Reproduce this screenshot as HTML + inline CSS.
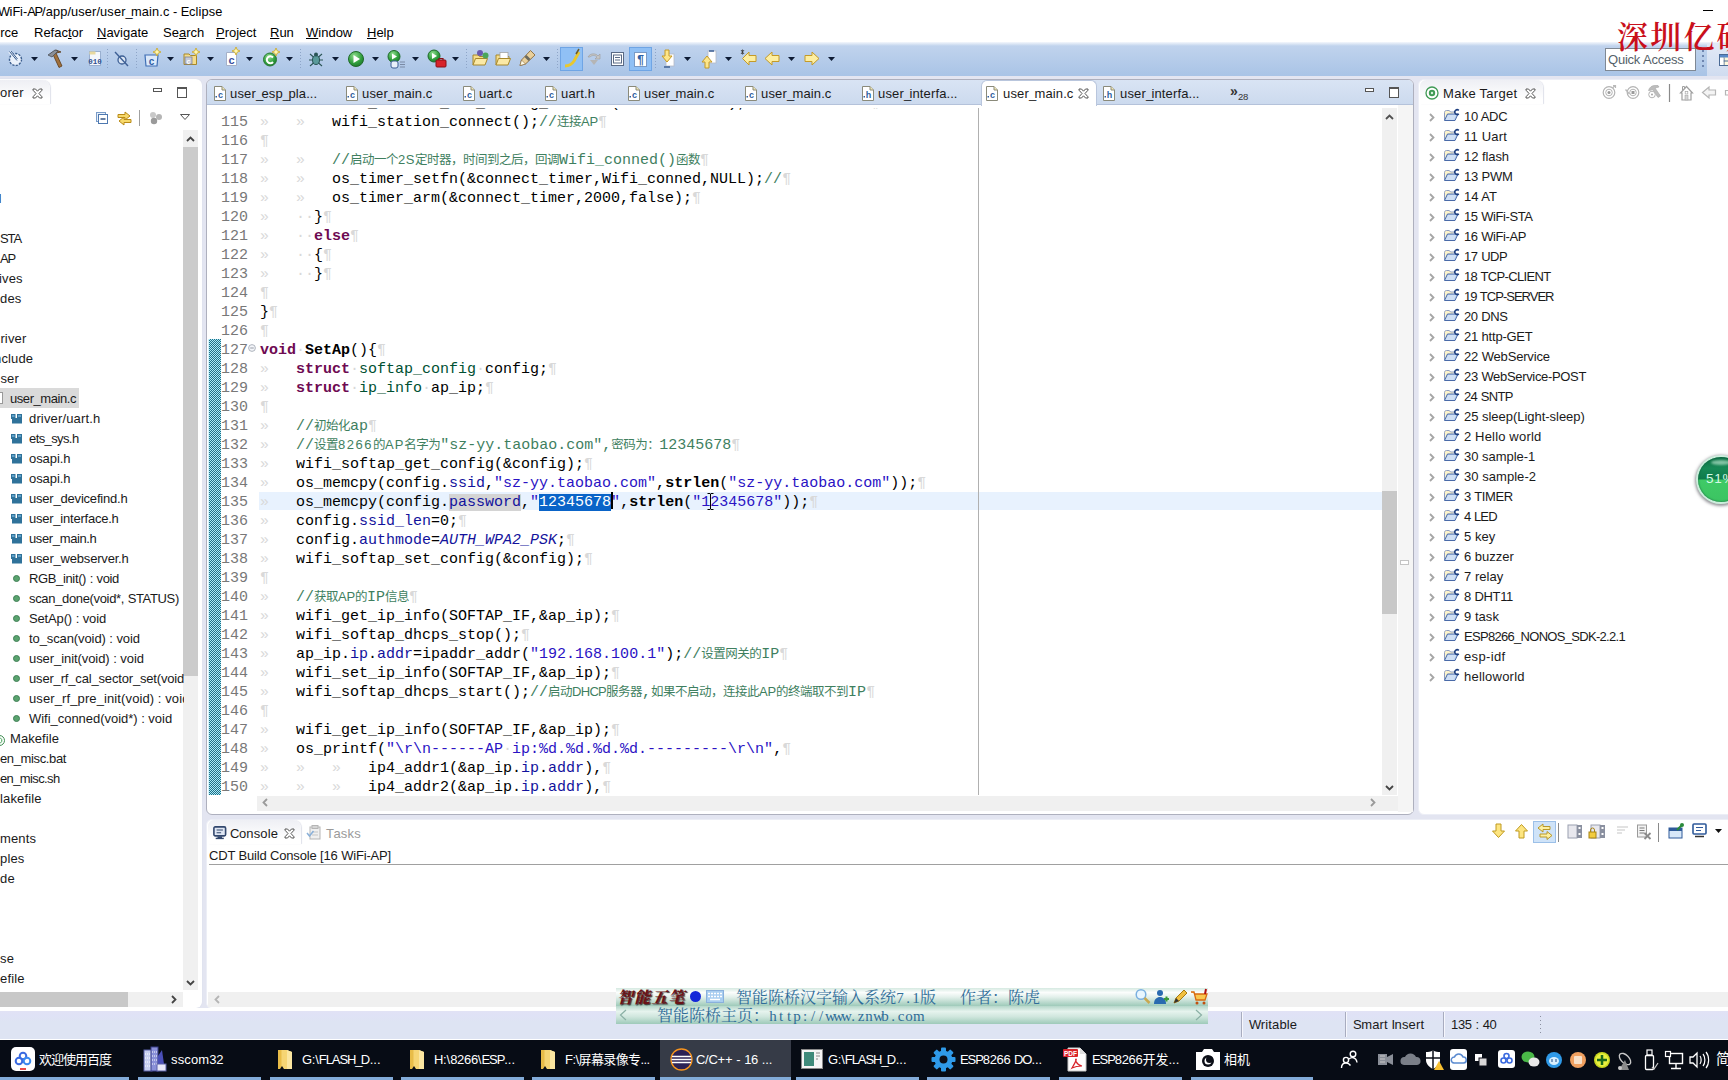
<!DOCTYPE html><html><head><meta charset="utf-8"><title>Eclipse</title><style>
*{box-sizing:border-box}
html,body{margin:0;padding:0}
body{width:1728px;height:1080px;overflow:hidden;position:relative;background:#fff;font-family:'Liberation Sans','Noto Sans CJK SC',sans-serif;font-size:13px;color:#1a1a1a}
.a{position:absolute}
.t{position:absolute;white-space:pre;line-height:16px;height:16px}
.code{position:absolute;white-space:pre;font-family:'Liberation Mono','Noto Sans CJK SC',monospace;font-size:15px;line-height:19px;height:19px;color:#000}
.ln{position:absolute;white-space:pre;font-family:'Liberation Mono','Noto Sans CJK SC',monospace;font-size:15px;line-height:19px;height:19px;color:#787878;width:27px;text-align:right;left:221px}
.k{color:#6e0a52;font-weight:bold}
.c{color:#3f7f5f}
.s{color:#2a12c4}
.f{color:#12129c}
.ty{color:#005032}
.b{font-weight:bold}
.w{color:#d9d9d9}
.cj{font-family:'Noto Sans CJK SC',sans-serif;font-size:12.5px;display:inline-block;text-align:center;line-height:12px;width:12px}
.la{font-family:'Liberation Sans',sans-serif;font-size:13px;line-height:12px}
.sel{background:#0a64c8;color:#fff}
.occ{background:#d4d4d4}
</style></head><body>
<div class="t" style="left:-2px;top:4px;font-size:12.8px;color:#000"><span style="letter-spacing:-.500px">W</span><span style="letter-spacing:.150px">i</span><span style="letter-spacing:-.500px">F</span><span style="letter-spacing:.150px">i</span>-<span style="letter-spacing:-1.100px">AP</span>/<span style="letter-spacing:.150px">app</span>/<span style="letter-spacing:.150px">user</span>/<span style="letter-spacing:.150px">user</span><span style="letter-spacing:-1.700px">_</span><span style="letter-spacing:.150px">main</span>.<span style="letter-spacing:.150px">c</span> - <span style="letter-spacing:-.500px">E</span><span style="letter-spacing:.150px">clipse</span></div>
<div class="a" style="left:1703px;top:10px;width:10px;height:1px;background:#000"></div>
<div class="t" style="left:-7px;top:25px;font-size:13px;color:#000">urce</div>
<div class="t" style="left:34px;top:25px;font-size:13px;color:#000">Refac<u>t</u>or</div>
<div class="t" style="left:97px;top:25px;font-size:13px;color:#000"><u>N</u>avigate</div>
<div class="t" style="left:163px;top:25px;font-size:13px;color:#000">Se<u>a</u>rch</div>
<div class="t" style="left:216px;top:25px;font-size:13px;color:#000"><u>P</u>roject</div>
<div class="t" style="left:270px;top:25px;font-size:13px;color:#000"><u>R</u>un</div>
<div class="t" style="left:306px;top:25px;font-size:13px;color:#000"><u>W</u>indow</div>
<div class="t" style="left:367px;top:25px;font-size:13px;color:#000"><u>H</u>elp</div>
<div class="a" style="left:0px;top:42px;width:1728px;height:34px;background:linear-gradient(#f4f7fc 0,#c0d3ed 4px,#a9c4e6 100%)"></div>
<div class="a" style="left:0px;top:76px;width:1728px;height:1004px;background:#e3e5f1"></div>
<svg class="a" style="left:0;top:43px" width="860" height="32" viewBox="0 0 860 32"><defs><radialGradient id="gr" cx=".4" cy=".3" r=".8"><stop offset="0" stop-color="#8fdc8f"/><stop offset=".6" stop-color="#2f9e3c"/><stop offset="1" stop-color="#1a6e28"/></radialGradient></defs><circle cx="15.500" cy="16.500" r="6" fill="#eaf1fb" stroke="#3d5f8f" stroke-width="1.400" stroke-dasharray="2.200 1.200"/><path d="M9.500 8.500l7.500 9" stroke="#e8f0fb" stroke-width="3"/><path d="M9.500 8.500l7.500 9M11 8l6.500 8" stroke="#3d5f8f" stroke-width="1"/><path d="M31 14h7l-3.500 4z" fill="#0d1a33"/><path d="M50 11l6-4 5 2-5 1 6 13-3 1.500-6-13z" fill="#a0703c" stroke="#5a3a18" stroke-width=".8"/><path d="M48 12l7-5 3 1-6 6z" fill="#8a8f98" stroke="#4a4f58" stroke-width=".8"/><path d="M71 14h7l-3.500 4z" fill="#0d1a33"/><rect x="89.500" y="8.500" width="11" height="14" fill="#f4f7fc" stroke="#9ab0d0"/><rect x="89.500" y="8.500" width="6" height="3" fill="#e8d9a0"/><text x="95" y="21" font-size="7.500" font-family="Liberation Mono,monospace" font-weight="bold" fill="#2f4f8f" text-anchor="middle">010</text><path d="M107.500 6v20" stroke="#8ea5c8" stroke-dasharray="1 2"/><circle cx="122" cy="17" r="4" fill="#dbe6f5" stroke="#3d5f95" stroke-width="1.300"/><path d="M115 9l13 14" stroke="#3d5f95" stroke-width="1.400"/><path d="M136.500 6v20" stroke="#8ea5c8" stroke-dasharray="1 2"/><path d="M145 12h13l-1 11h-11z" fill="#dce9fa" stroke="#3f6fb5" stroke-width="1.200"/><text x="151.500" y="21.500" font-size="10" font-family="Liberation Sans,sans-serif" font-weight="bold" fill="#2f5fa5" text-anchor="middle">c</text><path d="M157 5l1.200 2.800 2.800 1.200-2.800 1.200L157 13l-1.200-2.800L153 9l2.800-1.200z" fill="#fff6b0" stroke="#c9a520" stroke-width=".8"/><path d="M167 14h7l-3.500 4z" fill="#0d1a33"/><path d="M184 11h5l1.500 1.500h6v9h-12.500z" fill="#f5dd8a" stroke="#a8882a" stroke-width="1"/><rect x="185" y="14" width="7" height="7" fill="#c5cad8" stroke="#7a8098" stroke-width=".8"/><text x="188.500" y="20.500" font-size="7" font-family="Liberation Sans,sans-serif" font-weight="bold" fill="#fff" text-anchor="middle">c</text><path d="M196 5l1.200 2.800 2.800 1.200-2.800 1.200L196 13l-1.200-2.800L192 9l2.800-1.200z" fill="#fff6b0" stroke="#c9a520" stroke-width=".8"/><path d="M207 14h7l-3.500 4z" fill="#0d1a33"/><path d="M226.500 9.500h8l2 2v11h-10z" fill="#fff" stroke="#a5b0c8"/><text x="231.500" y="21" font-size="11" font-family="Liberation Sans,sans-serif" font-weight="bold" fill="#3a4fa0" text-anchor="middle">c</text><path d="M236 4l1.200 2.800 2.800 1.200-2.800 1.200L236 12l-1.200-2.800L232 8l2.800-1.200z" fill="#fff6b0" stroke="#c9a520" stroke-width=".8"/><path d="M246 14h7l-3.500 4z" fill="#0d1a33"/><circle cx="270" cy="16.500" r="6.500" fill="url(#gr)" stroke="#2a7a35" stroke-width="1"/><path d="M273 14.500a3.500 3.500 0 1 0 0 4.500" fill="none" stroke="#fff" stroke-width="2"/><path d="M276 5l1.200 2.800 2.800 1.200-2.800 1.200L276 13l-1.200-2.800L272 9l2.800-1.200z" fill="#fff6b0" stroke="#c9a520" stroke-width=".8"/><path d="M286 14h7l-3.500 4z" fill="#0d1a33"/><path d="M300.500 6v20" stroke="#8ea5c8" stroke-dasharray="1 2"/><ellipse cx="316" cy="17" rx="3.500" ry="4.500" fill="#5a9a9a" stroke="#2a5555" stroke-width="1"/><circle cx="316" cy="11.500" r="2" fill="#2a5555"/><path d="M310 11l3.500 3M322 11l-3.500 3M309 17h3.500M323 17h-3.500M310 23l3.500-3M322 23l-3.500-3" stroke="#2a5555" stroke-width="1.100"/><path d="M332 14h7l-3.500 4z" fill="#0d1a33"/><circle cx="356" cy="16" r="7.500" fill="url(#gr)" stroke="#1f6a2a" stroke-width="1"/><path d="M353.500 12l6.500 4-6.500 4z" fill="#fff"/><path d="M372 14h7l-3.500 4z" fill="#0d1a33"/><circle cx="394" cy="13.500" r="6" fill="url(#gr)" stroke="#1f6a2a" stroke-width="1"/><path d="M392 10.500l5 3-5 3z" fill="#fff"/><rect x="391" y="18" width="7" height="7" rx="2" fill="#e8f0fa" stroke="#3d5f95"/><path d="M400 19h5M400 21.500h5M400 24h5" stroke="#7a8aa5"/><path d="M412 14h7l-3.500 4z" fill="#0d1a33"/><circle cx="434" cy="13" r="6" fill="url(#gr)" stroke="#1f6a2a" stroke-width="1"/><path d="M432 10l5 3-5 3z" fill="#fff"/><rect x="436" y="17" width="10" height="7" rx="1" fill="#d8232a" stroke="#8a1015"/><path d="M439 17v-1.500h4V17" fill="none" stroke="#8a1015" stroke-width="1.200"/><path d="M452 14h7l-3.500 4z" fill="#0d1a33"/><path d="M466.500 6v20" stroke="#8ea5c8" stroke-dasharray="1 2"/><path d="M473 22V12h5l1.500 1.500h6.500V15" fill="#f5dd8a" stroke="#a8882a"/><path d="M473 22l2.500-6.500h12l-2.500 6.500z" fill="#fbe9a5" stroke="#a8882a"/><circle cx="480" cy="10" r="3" fill="#6a5ab0"/><circle cx="485.500" cy="12.500" r="3" fill="#4aa55a"/><path d="M496 22V12h5l1.500 1.500h6.500V15" fill="#f5dd8a" stroke="#a8882a"/><rect x="500" y="9.500" width="8" height="6" fill="#fff" stroke="#a5a5a5" stroke-width=".8"/><path d="M496 22l2.500-6.500h12l-2.500 6.500z" fill="#fbe9a5" stroke="#a8882a"/><path d="M520 22.500l1.500-5.500 9-9.500 4.500 4.500-9.500 9z" fill="#e9cf9a" stroke="#8a6a3a" stroke-width=".9"/><path d="M520 22.500l1.500-5.500 4 4z" fill="#fffbe8" stroke="#8a6a3a" stroke-width=".6"/><path d="M524.500 14l4 4 2-2-4-4z" fill="#6a6a60"/><path d="M543 14h7l-3.500 4z" fill="#0d1a33"/><path d="M557.500 6v20" stroke="#8ea5c8" stroke-dasharray="1 2"/><rect x="560.500" y="4.500" width="22" height="23" fill="#90c0f5" stroke="#6fa5e5"/><path d="M565 23c3 0 7-2 9-5l5-9" fill="none" stroke="#e8c830" stroke-width="3"/><path d="M576 11l3-5" stroke="#6a5a2a" stroke-width="1.500"/><path d="M588 14c2-4 8-4 10-1l2-2v5h-5l2-2c-2-2-5-2-7 0z" fill="#c5c5c5" stroke="#9a9a9a" stroke-width=".6"/><path d="M590 17l4 5 4-5z" fill="#b5b5b5"/><rect x="611.500" y="9.500" width="12" height="13" fill="#fff" stroke="#5a6a85"/><rect x="613.500" y="12" width="8" height="8" fill="none" stroke="#5a6a85"/><path d="M615 14.500h5M615 17h5" stroke="#5a6a85"/><rect x="629.500" y="4.500" width="22" height="23" fill="#90c0f5" stroke="#6fa5e5"/><rect x="634.500" y="9.500" width="12" height="14" fill="#fff" stroke="#7a9ac5"/><text x="640.500" y="21" font-size="12" font-family="Liberation Sans,sans-serif" font-weight="bold" fill="#2f5fa5" text-anchor="middle">¶</text><path d="M655.500 6v20" stroke="#8ea5c8" stroke-dasharray="1 2"/><rect x="666" y="11" width="8" height="12" fill="#fff" stroke="#b5bac5" stroke-width=".8"/><path d="M665 7h4v6h3l-5 6-5-6h3z" fill="#fde68a" stroke="#c49a28" stroke-width="1"/><path d="M664 24h6" stroke="#3d5f95" stroke-width="1.500"/><path d="M684 14h7l-3.500 4z" fill="#0d1a33"/><rect x="708" y="8" width="8" height="12" fill="#fff" stroke="#b5bac5" stroke-width=".8"/><path d="M705 25h4v-6h3l-5-6-5 6h3z" fill="#fde68a" stroke="#c49a28" stroke-width="1"/><path d="M709 8h5" stroke="#3d5f95" stroke-width="1.500"/><path d="M725 14h7l-3.500 4z" fill="#0d1a33"/><path d="M756 12.500h-7V9l-6.500 6.500 6.500 6.500v-3.500h7z" fill="#fdeea0" stroke="#c49a28" stroke-width="1"/><path d="M741 7l3 4M744 7l-3 4M742.500 6.500v5" stroke="#333" stroke-width=".8"/><path d="M779 12.500h-7V9l-7 6.500 7 6.500v-3.500h7z" fill="#fdeea0" stroke="#c49a28" stroke-width="1"/><path d="M788 14h7l-3.500 4z" fill="#0d1a33"/><path d="M805 12.500h7V9l7 6.500-7 6.500v-3.500h-7z" fill="#fdeea0" stroke="#c49a28" stroke-width="1"/><path d="M828 14h7l-3.500 4z" fill="#0d1a33"/></svg>
<div class="a" style="left:1702px;top:50px;width:2px;height:20px;background:repeating-linear-gradient(#6f86b0 0 2px,transparent 2px 5px)"></div>
<div class="a" style="left:1707px;top:44px;width:21px;height:32px;background:linear-gradient(#e2e9f6,#d0dcf0)"></div>
<svg class="a" style="left:1719px;top:53px" width="9" height="14" viewBox="0 0 9 14"><rect x="0.500" y="1.500" width="12" height="11" fill="#fdf8dc" stroke="#4a6a95"/><rect x="1" y="2" width="11" height="2.500" fill="#5a8ac8"/><path d="M0.500 8h12M5 4.500v8" stroke="#4a6a95"/><rect x="1" y="5" width="3.500" height="7" fill="#fff"/></svg>
<div class="a" style="left:1605px;top:48px;width:91px;height:23px;background:#fff;border:1px solid #7f8894"></div>
<div class="t" style="left:1608px;top:52px;color:#55626a;font-size:13px;letter-spacing:-0.23px;word-spacing:0.23px">Quick Access</div>
<div class="a" style="left:1617px;top:13px;font-family:'Noto Serif CJK SC',serif;font-weight:600;font-size:31px;line-height:44px;color:#c9101c;white-space:pre;letter-spacing:2.200px">深圳亿研</div>
<div class="a" style="left:-10px;top:79px;width:212px;height:929px;background:#fff;border-radius:0 6px 6px 0;box-shadow:0 0 1px #ccd0e0"></div>
<div class="a" style="left:-10px;top:80px;width:60px;height:24px;background:linear-gradient(#eeeff4,#fff 80%);border-radius:0 8px 0 0;box-shadow:1px 0 1px #dfe1ea"></div>
<div class="t" style="left:0px;top:85px;font-size:13px"><span style="letter-spacing:.150px">orer</span></div>
<svg class="a" style="left:32px;top:88px" width="11" height="11" viewBox="0 0 11 11"><path d="M1 1h2.5l2 2.2 2-2.2H10v1.2L7 5.5l3 3.3V10H7.5l-2-2.2-2 2.2H1V8.8l3-3.3-3-3.3z" fill="#fff" stroke="#555" stroke-width="1"/></svg>
<div class="a" style="left:153px;top:88px;width:9px;height:4px;border:1px solid #555;background:#fff"></div>
<div class="a" style="left:177px;top:87px;width:10px;height:11px;border:1px solid #555;border-top-width:2px;background:#fff"></div>
<svg class="a" style="left:94px;top:109px" width="100" height="18" viewBox="0 0 100 18"><rect x="2.5" y="3.5" width="9" height="9" fill="#e8f0fa" stroke="#7a9cc8"/><rect x="4.5" y="5.5" width="9" height="9" fill="#fff" stroke="#4d78b0"/><path d="M6.5 10h5" stroke="#26487a" stroke-width="1.4"/><path d="M24 5.5h7V3l5 4-5 4V8.5h-7z" fill="#f7d96a" stroke="#b98a18"/><path d="M37 10.500h-7V8l-5 4 5 4v-2.500h7z" fill="#f7d96a" stroke="#b98a18"/><path d="M45.500 1v16" stroke="#a0a0a0"/><circle cx="59" cy="6" r="3" fill="#c8c8c8"/><circle cx="65" cy="8" r="3" fill="#b5b5b5"/><circle cx="60" cy="12" r="3.200" fill="#9a9a9a"/><path d="M86.500 5.500h9l-4.500 5z" fill="#fff" stroke="#555"/></svg>
<div class="a" style="left:183px;top:130px;width:15px;height:860px;background:#f0f0f0"></div>
<div class="a" style="left:183px;top:147px;width:15px;height:529px;background:#cbcbcb"></div>
<svg class="a" style="left:186px;top:136px" width="9" height="6" viewBox="0 0 9 6"><path d="M1 5l3.500-3.500L8 5" fill="none" stroke="#444" stroke-width="1.800"/></svg>
<svg class="a" style="left:186px;top:980px" width="9" height="6" viewBox="0 0 9 6"><path d="M1 1l3.500 3.500L8 1" fill="none" stroke="#444" stroke-width="1.800"/></svg>
<div class="a" style="left:0px;top:992px;width:183px;height:15px;background:#f0f0f0"></div>
<div class="a" style="left:0px;top:992px;width:128px;height:15px;background:#c8c8c8"></div>
<svg class="a" style="left:171px;top:995px" width="6" height="9" viewBox="0 0 6 9"><path d="M1 1l3.500 3.500L1 8" fill="none" stroke="#444" stroke-width="1.800"/></svg>
<div class="a" style="left:0;top:100px;width:184px;height:892px;overflow:hidden">
<div class="t" style="left:-1.5px;top:91px;font-size:13px"><span style="letter-spacing:.150px">l</span></div>
<div class="t" style="left:0px;top:131px;font-size:13px"><span style="letter-spacing:-1.100px">STA</span></div>
<div class="t" style="left:0px;top:151px;font-size:13px"><span style="letter-spacing:-1.100px">AP</span></div>
<div class="t" style="left:-1px;top:171px;font-size:13px"><span style="letter-spacing:.150px">ives</span></div>
<div class="t" style="left:0px;top:191px;font-size:13px"><span style="letter-spacing:.150px">des</span></div>
<div class="t" style="left:-7px;top:231px;font-size:13px"><span style="letter-spacing:.150px">driver</span></div>
<div class="t" style="left:-6px;top:251px;font-size:13px"><span style="letter-spacing:.150px">nclude</span></div>
<div class="t" style="left:-7px;top:271px;font-size:13px"><span style="letter-spacing:.150px">user</span></div>
<div class="a" style="left:0px;top:288px;width:79px;height:20px;background:#dadada"></div>
<div class="a" style="left:-3px;top:292px;width:6px;height:12px;border:1px solid #999;background:#fff"></div>
<div class="t" style="left:10px;top:291px;font-size:13px;letter-spacing:-0.44px;word-spacing:0.44px">user_main.c</div>
<svg class="a" style="left:11px;top:314px" width="11" height="10" viewBox="0 0 11 10"><path d="M0 0h4.500v4H6V0h5v9.500H1V5H0z" fill="#2f729a"/><path d="M1 1h2.500v2H1zM7 1h3v2H7z" fill="#5fa0c8"/></svg>
<div class="t" style="left:29px;top:311px;font-size:13px;letter-spacing:0.15px;word-spacing:-0.15px">driver/uart.h</div>
<svg class="a" style="left:11px;top:334px" width="11" height="10" viewBox="0 0 11 10"><path d="M0 0h4.500v4H6V0h5v9.500H1V5H0z" fill="#2f729a"/><path d="M1 1h2.500v2H1zM7 1h3v2H7z" fill="#5fa0c8"/></svg>
<div class="t" style="left:29px;top:331px;font-size:13px;letter-spacing:-0.60px;word-spacing:0.60px">ets_sys.h</div>
<svg class="a" style="left:11px;top:354px" width="11" height="10" viewBox="0 0 11 10"><path d="M0 0h4.500v4H6V0h5v9.500H1V5H0z" fill="#2f729a"/><path d="M1 1h2.500v2H1zM7 1h3v2H7z" fill="#5fa0c8"/></svg>
<div class="t" style="left:29px;top:351px;font-size:13px;letter-spacing:-0.06px;word-spacing:0.06px">osapi.h</div>
<svg class="a" style="left:11px;top:374px" width="11" height="10" viewBox="0 0 11 10"><path d="M0 0h4.500v4H6V0h5v9.500H1V5H0z" fill="#2f729a"/><path d="M1 1h2.500v2H1zM7 1h3v2H7z" fill="#5fa0c8"/></svg>
<div class="t" style="left:29px;top:371px;font-size:13px;letter-spacing:-0.06px;word-spacing:0.06px">osapi.h</div>
<svg class="a" style="left:11px;top:394px" width="11" height="10" viewBox="0 0 11 10"><path d="M0 0h4.500v4H6V0h5v9.500H1V5H0z" fill="#2f729a"/><path d="M1 1h2.500v2H1zM7 1h3v2H7z" fill="#5fa0c8"/></svg>
<div class="t" style="left:29px;top:391px;font-size:13px;letter-spacing:-0.20px;word-spacing:0.20px">user_devicefind.h</div>
<svg class="a" style="left:11px;top:414px" width="11" height="10" viewBox="0 0 11 10"><path d="M0 0h4.500v4H6V0h5v9.500H1V5H0z" fill="#2f729a"/><path d="M1 1h2.500v2H1zM7 1h3v2H7z" fill="#5fa0c8"/></svg>
<div class="t" style="left:29px;top:411px;font-size:13px;letter-spacing:-0.23px;word-spacing:0.23px">user_interface.h</div>
<svg class="a" style="left:11px;top:434px" width="11" height="10" viewBox="0 0 11 10"><path d="M0 0h4.500v4H6V0h5v9.500H1V5H0z" fill="#2f729a"/><path d="M1 1h2.500v2H1zM7 1h3v2H7z" fill="#5fa0c8"/></svg>
<div class="t" style="left:29px;top:431px;font-size:13px;letter-spacing:-0.37px;word-spacing:0.37px">user_main.h</div>
<svg class="a" style="left:11px;top:454px" width="11" height="10" viewBox="0 0 11 10"><path d="M0 0h4.500v4H6V0h5v9.500H1V5H0z" fill="#2f729a"/><path d="M1 1h2.500v2H1zM7 1h3v2H7z" fill="#5fa0c8"/></svg>
<div class="t" style="left:29px;top:451px;font-size:13px;letter-spacing:-0.19px;word-spacing:0.19px">user_webserver.h</div>
<div class="a" style="left:13px;top:475px;width:7px;height:7px;border-radius:50%;background:#5aa36f;border:1px solid #3f7f55"></div>
<div class="t" style="left:29px;top:471px;font-size:13px;letter-spacing:-0.36px;word-spacing:0.36px">RGB_init() : void</div>
<div class="a" style="left:13px;top:495px;width:7px;height:7px;border-radius:50%;background:#5aa36f;border:1px solid #3f7f55"></div>
<div class="t" style="left:29px;top:491px;font-size:13px;letter-spacing:-0.34px;word-spacing:0.34px">scan_done(void*, STATUS)</div>
<div class="a" style="left:13px;top:515px;width:7px;height:7px;border-radius:50%;background:#5aa36f;border:1px solid #3f7f55"></div>
<div class="t" style="left:29px;top:511px;font-size:13px;letter-spacing:-0.15px;word-spacing:0.15px">SetAp() : void</div>
<div class="a" style="left:13px;top:535px;width:7px;height:7px;border-radius:50%;background:#5aa36f;border:1px solid #3f7f55"></div>
<div class="t" style="left:29px;top:531px;font-size:13px;letter-spacing:-0.10px;word-spacing:0.10px">to_scan(void) : void</div>
<div class="a" style="left:13px;top:555px;width:7px;height:7px;border-radius:50%;background:#5aa36f;border:1px solid #3f7f55"></div>
<div class="t" style="left:29px;top:551px;font-size:13px;letter-spacing:-0.07px;word-spacing:0.07px">user_init(void) : void</div>
<div class="a" style="left:13px;top:575px;width:7px;height:7px;border-radius:50%;background:#5aa36f;border:1px solid #3f7f55"></div>
<div class="t" style="left:29px;top:571px;font-size:13px;letter-spacing:-0.17px;word-spacing:0.17px">user_rf_cal_sector_set(void</div>
<div class="a" style="left:13px;top:595px;width:7px;height:7px;border-radius:50%;background:#5aa36f;border:1px solid #3f7f55"></div>
<div class="t" style="left:29px;top:591px;font-size:13px;letter-spacing:0.11px;word-spacing:-0.11px">user_rf_pre_init(void) : void</div>
<div class="a" style="left:13px;top:615px;width:7px;height:7px;border-radius:50%;background:#5aa36f;border:1px solid #3f7f55"></div>
<div class="t" style="left:29px;top:611px;font-size:13px;letter-spacing:-0.03px;word-spacing:0.03px">Wifi_conned(void*) : void</div>
<div class="a" style="left:-6px;top:635px;width:11px;height:11px;border-radius:50%;border:1px solid #3d8c50;background:radial-gradient(#fff 25%,#5fb070 30%,#fff 55%)"></div>
<div class="t" style="left:10px;top:631px;font-size:13px;letter-spacing:0.07px;word-spacing:-0.07px">Makefile</div>
<div class="t" style="left:0px;top:651px;font-size:13px;letter-spacing:-0.37px;word-spacing:0.37px">en_misc.bat</div>
<div class="t" style="left:0px;top:671px;font-size:13px;letter-spacing:-0.62px;word-spacing:0.62px">en_misc.sh</div>
<div class="t" style="left:0px;top:691px;font-size:13px"><span style="letter-spacing:.150px">lakefile</span></div>
<div class="t" style="left:0px;top:731px;font-size:13px"><span style="letter-spacing:.150px">ments</span></div>
<div class="t" style="left:0px;top:751px;font-size:13px"><span style="letter-spacing:.150px">ples</span></div>
<div class="t" style="left:0px;top:771px;font-size:13px"><span style="letter-spacing:.150px">de</span></div>
<div class="t" style="left:0px;top:851px;font-size:13px"><span style="letter-spacing:.150px">se</span></div>
<div class="t" style="left:0px;top:871px;font-size:13px"><span style="letter-spacing:.150px">efile</span></div>
</div>
<div class="a" style="left:206px;top:79px;width:1208px;height:736px;background:#fff;border-radius:6px;border:1px solid #aeb0be;overflow:hidden"></div>
<div class="a" style="left:207px;top:80px;width:1206px;height:25px;background:linear-gradient(#d9e4f4,#ccdaee);border-radius:5px 5px 0 0;border-bottom:1px solid #b4c2da"></div>
<div class="a" style="left:981px;top:80px;width:116px;height:26px;background:#fff;border-radius:6px 6px 0 0;border:1px solid #b9c6dd;border-bottom:none"></div>
<svg class="a" style="left:214px;top:86px" width="12" height="15" viewBox="0 0 12 15"><path d="M0.500 0.500h7.500l3.500 3.500v10.500h-11z" fill="#fff" stroke="#8a8a7a"/><path d="M8 0.500v3.500h3.500" fill="#f3e9b0" stroke="#8a8a7a"/><text x="6.500" y="11.500" font-family="Liberation Sans,sans-serif" font-weight="bold" font-size="9" fill="#2f5f9f" text-anchor="middle">c</text><rect x="1.500" y="10" width="1.500" height="1.500" fill="#2f5f9f"/></svg>
<div class="t" style="left:230px;top:86px;font-size:13px;color:#1a1a1a"><span style="letter-spacing:.150px">user</span><span style="letter-spacing:-1.700px">_</span><span style="letter-spacing:.150px">esp</span><span style="letter-spacing:-1.700px">_</span><span style="letter-spacing:.150px">pla</span>...</div>
<svg class="a" style="left:346px;top:86px" width="12" height="15" viewBox="0 0 12 15"><path d="M0.500 0.500h7.500l3.500 3.500v10.500h-11z" fill="#fff" stroke="#8a8a7a"/><path d="M8 0.500v3.500h3.500" fill="#f3e9b0" stroke="#8a8a7a"/><text x="6.500" y="11.500" font-family="Liberation Sans,sans-serif" font-weight="bold" font-size="9" fill="#2f5f9f" text-anchor="middle">c</text><rect x="1.500" y="10" width="1.500" height="1.500" fill="#2f5f9f"/></svg>
<div class="t" style="left:362px;top:86px;font-size:13px;color:#1a1a1a"><span style="letter-spacing:.150px">user</span><span style="letter-spacing:-1.700px">_</span><span style="letter-spacing:.150px">main</span>.<span style="letter-spacing:.150px">c</span></div>
<svg class="a" style="left:463px;top:86px" width="12" height="15" viewBox="0 0 12 15"><path d="M0.500 0.500h7.500l3.500 3.500v10.500h-11z" fill="#fff" stroke="#8a8a7a"/><path d="M8 0.500v3.500h3.500" fill="#f3e9b0" stroke="#8a8a7a"/><text x="6.500" y="11.500" font-family="Liberation Sans,sans-serif" font-weight="bold" font-size="9" fill="#2f5f9f" text-anchor="middle">c</text><rect x="1.500" y="10" width="1.500" height="1.500" fill="#2f5f9f"/></svg>
<div class="t" style="left:479px;top:86px;font-size:13px;color:#1a1a1a"><span style="letter-spacing:.150px">uart</span>.<span style="letter-spacing:.150px">c</span></div>
<svg class="a" style="left:545px;top:86px" width="12" height="15" viewBox="0 0 12 15"><path d="M0.500 0.500h7.500l3.500 3.500v10.500h-11z" fill="#fff" stroke="#8a8a7a"/><path d="M8 0.500v3.500h3.500" fill="#f3e9b0" stroke="#8a8a7a"/><text x="6.500" y="11.500" font-family="Liberation Sans,sans-serif" font-weight="bold" font-size="9" fill="#2f5f9f" text-anchor="middle">c</text><rect x="1.500" y="10" width="1.500" height="1.500" fill="#2f5f9f"/></svg>
<div class="t" style="left:561px;top:86px;font-size:13px;color:#1a1a1a"><span style="letter-spacing:.150px">uart</span>.<span style="letter-spacing:.150px">h</span></div>
<svg class="a" style="left:628px;top:86px" width="12" height="15" viewBox="0 0 12 15"><path d="M0.500 0.500h7.500l3.500 3.500v10.500h-11z" fill="#fff" stroke="#8a8a7a"/><path d="M8 0.500v3.500h3.500" fill="#f3e9b0" stroke="#8a8a7a"/><text x="6.500" y="11.500" font-family="Liberation Sans,sans-serif" font-weight="bold" font-size="9" fill="#2f5f9f" text-anchor="middle">c</text><rect x="1.500" y="10" width="1.500" height="1.500" fill="#2f5f9f"/></svg>
<div class="t" style="left:644px;top:86px;font-size:13px;color:#1a1a1a"><span style="letter-spacing:.150px">user</span><span style="letter-spacing:-1.700px">_</span><span style="letter-spacing:.150px">main</span>.<span style="letter-spacing:.150px">c</span></div>
<svg class="a" style="left:745px;top:86px" width="12" height="15" viewBox="0 0 12 15"><path d="M0.500 0.500h7.500l3.500 3.500v10.500h-11z" fill="#fff" stroke="#8a8a7a"/><path d="M8 0.500v3.500h3.500" fill="#f3e9b0" stroke="#8a8a7a"/><text x="6.500" y="11.500" font-family="Liberation Sans,sans-serif" font-weight="bold" font-size="9" fill="#2f5f9f" text-anchor="middle">c</text><rect x="1.500" y="10" width="1.500" height="1.500" fill="#2f5f9f"/></svg>
<div class="t" style="left:761px;top:86px;font-size:13px;color:#1a1a1a"><span style="letter-spacing:.150px">user</span><span style="letter-spacing:-1.700px">_</span><span style="letter-spacing:.150px">main</span>.<span style="letter-spacing:.150px">c</span></div>
<svg class="a" style="left:862px;top:86px" width="12" height="15" viewBox="0 0 12 15"><path d="M0.500 0.500h7.500l3.500 3.500v10.500h-11z" fill="#fff" stroke="#8a8a7a"/><path d="M8 0.500v3.500h3.500" fill="#f3e9b0" stroke="#8a8a7a"/><text x="6.500" y="11.500" font-family="Liberation Sans,sans-serif" font-weight="bold" font-size="9" fill="#2f5f9f" text-anchor="middle">h</text><rect x="1.500" y="10" width="1.500" height="1.500" fill="#2f5f9f"/></svg>
<div class="t" style="left:878px;top:86px;font-size:13px;color:#1a1a1a"><span style="letter-spacing:.150px">user</span><span style="letter-spacing:-1.700px">_</span><span style="letter-spacing:.150px">interfa</span>...</div>
<svg class="a" style="left:986px;top:86px" width="12" height="15" viewBox="0 0 12 15"><path d="M0.500 0.500h7.500l3.500 3.500v10.500h-11z" fill="#fff" stroke="#8a8a7a"/><path d="M8 0.500v3.500h3.500" fill="#f3e9b0" stroke="#8a8a7a"/><text x="6.500" y="11.500" font-family="Liberation Sans,sans-serif" font-weight="bold" font-size="9" fill="#2f5f9f" text-anchor="middle">c</text><rect x="1.500" y="10" width="1.500" height="1.500" fill="#2f5f9f"/></svg>
<div class="t" style="left:1003px;top:86px;font-size:13px;color:#1a1a1a"><span style="letter-spacing:.150px">user</span><span style="letter-spacing:-1.700px">_</span><span style="letter-spacing:.150px">main</span>.<span style="letter-spacing:.150px">c</span></div>
<svg class="a" style="left:1103px;top:86px" width="12" height="15" viewBox="0 0 12 15"><path d="M0.500 0.500h7.500l3.500 3.500v10.500h-11z" fill="#fff" stroke="#8a8a7a"/><path d="M8 0.500v3.500h3.500" fill="#f3e9b0" stroke="#8a8a7a"/><text x="6.500" y="11.500" font-family="Liberation Sans,sans-serif" font-weight="bold" font-size="9" fill="#2f5f9f" text-anchor="middle">h</text><rect x="1.500" y="10" width="1.500" height="1.500" fill="#2f5f9f"/></svg>
<div class="t" style="left:1120px;top:86px;font-size:13px;color:#1a1a1a"><span style="letter-spacing:.150px">user</span><span style="letter-spacing:-1.700px">_</span><span style="letter-spacing:.150px">interfa</span>...</div>
<svg class="a" style="left:1078px;top:88px" width="11" height="11" viewBox="0 0 11 11"><path d="M1 1h2.5l2 2.2 2-2.2H10v1.2L7 5.5l3 3.3V10H7.5l-2-2.2-2 2.2H1V8.8l3-3.3-3-3.3z" fill="#fff" stroke="#555" stroke-width="1"/></svg>
<div class="t" style="left:1230px;top:83px;font-size:14px;font-weight:bold;color:#333">»</div>
<div class="t" style="left:1238px;top:89px;font-size:9.500px;color:#333"><span style="letter-spacing:-.300px">28</span></div>
<div class="a" style="left:1365px;top:88px;width:9px;height:4px;border:1px solid #555;background:#fff"></div>
<div class="a" style="left:1389px;top:87px;width:10px;height:11px;border:1px solid #555;border-top-width:2px;background:#fff"></div>
<div class="a" style="left:208px;top:108px;width:1205px;height:687px;overflow:hidden;background:#fff">
<div class="a" style="left:51px;top:384px;width:1123px;height:18px;background:#e8f2fe"></div>
<div class="a" style="left:770px;top:-3px;width:1px;height:690px;background:#b0b0b0"></div>
<div class="a" style="left:0px;top:231px;width:1px;height:456px;background:#d8f3fb"></div>
<div class="a" style="left:1px;top:231px;width:12px;height:456px;background:repeating-conic-gradient(#226e84 0 25%,#a8eafa 0 50%) 0 0/2px 2px"></div>
<div class="a" style="left:1174px;top:-3px;width:15px;height:690px;background:#f0f0f0"></div>
<div class="a" style="left:1174px;top:383px;width:15px;height:123px;background:#c8c8c8"></div>
<svg class="a" style="left:1177px;top:6px" width="9" height="6" viewBox="0 0 9 6"><path d="M1 5l3.500-3.500L8 5" fill="none" stroke="#505050" stroke-width="1.800"/></svg>
<svg class="a" style="left:1177px;top:677px" width="9" height="6" viewBox="0 0 9 6"><path d="M1 1l3.500 3.500L8 1" fill="none" stroke="#444" stroke-width="1.800"/></svg>
<div class="ln" style="left:13px;top:-14px">114</div>
<div class="code" style="left:52px;top:-14px"><span class="w">»   </span><span class="w">»   </span>wifi_station_set_config_current(&amp;stationConf);<span class="c">//<span class="cj">设</span><span class="cj">置</span><span class="la" style="letter-spacing:1.64px">WIFI</span><span class="cj">接</span><span class="cj">口</span><span class="cj">参</span><span class="cj">数</span></span><span class="w">¶</span></div>
<div class="ln" style="left:13px;top:5px">115</div>
<div class="code" style="left:52px;top:5px"><span class="w">»   </span><span class="w">»   </span>wifi_station_connect();<span class="c">//<span class="cj">连</span><span class="cj">接</span><span class="la" style="letter-spacing:-0.17px">AP</span></span><span class="w">¶</span></div>
<div class="ln" style="left:13px;top:24px">116</div>
<div class="code" style="left:52px;top:24px"><span class="w">¶</span></div>
<div class="ln" style="left:13px;top:43px">117</div>
<div class="code" style="left:52px;top:43px"><span class="w">»   </span><span class="w">»   </span><span class="c">//<span class="cj">启</span><span class="cj">动</span><span class="cj">一</span><span class="cj">个</span><span class="la" style="letter-spacing:0.55px">2S</span><span class="cj">定</span><span class="cj">时</span><span class="cj">器</span><span class="cj">，</span><span class="cj">时</span><span class="cj">间</span><span class="cj">到</span><span class="cj">之</span><span class="cj">后</span><span class="cj">，</span><span class="cj">回</span><span class="cj">调</span>Wifi_conned()<span class="cj">函</span><span class="cj">数</span></span><span class="w">¶</span></div>
<div class="ln" style="left:13px;top:62px">118</div>
<div class="code" style="left:52px;top:62px"><span class="w">»   </span><span class="w">»   </span>os_timer_setfn(&amp;connect_timer,Wifi_conned,NULL);<span class="c">//</span><span class="w">¶</span></div>
<div class="ln" style="left:13px;top:81px">119</div>
<div class="code" style="left:52px;top:81px"><span class="w">»   </span><span class="w">»   </span>os_timer_arm(&amp;connect_timer,2000,false);<span class="w">¶</span></div>
<div class="ln" style="left:13px;top:100px">120</div>
<div class="code" style="left:52px;top:100px"><span class="w">»   </span><span class="w">·</span><span class="w">·</span>}<span class="w">¶</span></div>
<div class="ln" style="left:13px;top:119px">121</div>
<div class="code" style="left:52px;top:119px"><span class="w">»   </span><span class="w">·</span><span class="w">·</span><span class="k">else</span><span class="w">¶</span></div>
<div class="ln" style="left:13px;top:138px">122</div>
<div class="code" style="left:52px;top:138px"><span class="w">»   </span><span class="w">·</span><span class="w">·</span>{<span class="w">¶</span></div>
<div class="ln" style="left:13px;top:157px">123</div>
<div class="code" style="left:52px;top:157px"><span class="w">»   </span><span class="w">·</span><span class="w">·</span>}<span class="w">¶</span></div>
<div class="ln" style="left:13px;top:176px">124</div>
<div class="code" style="left:52px;top:176px"><span class="w">¶</span></div>
<div class="ln" style="left:13px;top:195px">125</div>
<div class="code" style="left:52px;top:195px">}<span class="w">¶</span></div>
<div class="ln" style="left:13px;top:214px">126</div>
<div class="code" style="left:52px;top:214px"><span class="w">¶</span></div>
<div class="ln" style="left:13px;top:233px">127</div>
<div class="code" style="left:52px;top:233px"><span class="k">void</span><span class="w">·</span><span class="b">SetAp</span>(){<span class="w">¶</span></div>
<div class="ln" style="left:13px;top:252px">128</div>
<div class="code" style="left:52px;top:252px"><span class="w">»   </span><span class="k">struct</span><span class="w">·</span><span class="ty">softap_config</span><span class="w">·</span>config;<span class="w">¶</span></div>
<div class="ln" style="left:13px;top:271px">129</div>
<div class="code" style="left:52px;top:271px"><span class="w">»   </span><span class="k">struct</span><span class="w">·</span><span class="ty">ip_info</span><span class="w">·</span>ap_ip;<span class="w">¶</span></div>
<div class="ln" style="left:13px;top:290px">130</div>
<div class="code" style="left:52px;top:290px"><span class="w">¶</span></div>
<div class="ln" style="left:13px;top:309px">131</div>
<div class="code" style="left:52px;top:309px"><span class="w">»   </span><span class="c">//<span class="cj">初</span><span class="cj">始</span><span class="cj">化</span>ap</span><span class="w">¶</span></div>
<div class="ln" style="left:13px;top:328px">132</div>
<div class="code" style="left:52px;top:328px"><span class="w">»   </span><span class="c">//<span class="cj">设</span><span class="cj">置</span><span class="la" style="letter-spacing:1.52px">8266</span><span class="cj">的</span><span class="la" style="letter-spacing:0.93px">AP</span><span class="cj">名</span><span class="cj">字</span><span class="cj">为</span>&quot;sz-yy.taobao.com&quot;,<span class="cj">密</span><span class="cj">码</span><span class="cj">为</span><span class="cj">：</span>12345678</span><span class="w">¶</span></div>
<div class="ln" style="left:13px;top:347px">133</div>
<div class="code" style="left:52px;top:347px"><span class="w">»   </span>wifi_softap_get_config(&amp;config);<span class="w">¶</span></div>
<div class="ln" style="left:13px;top:366px">134</div>
<div class="code" style="left:52px;top:366px"><span class="w">»   </span>os_memcpy(config.<span class="f">ssid</span>,<span class="s">&quot;sz-yy.taobao.com&quot;</span>,<span class="b">strlen</span>(<span class="s">&quot;sz-yy.taobao.com&quot;</span>));<span class="w">¶</span></div>
<div class="ln" style="left:13px;top:385px">135</div>
<div class="code" style="left:52px;top:385px"><span class="w">»   </span>os_memcpy(config.<span class="f occ">password</span>,<span class="s">&quot;<span class="sel">12345678</span>&quot;</span>,<span class="b">strlen</span>(<span class="s">&quot;12345678&quot;</span>));<span class="w">¶</span></div>
<div class="ln" style="left:13px;top:404px">136</div>
<div class="code" style="left:52px;top:404px"><span class="w">»   </span>config.<span class="f">ssid_len</span>=0;<span class="w">¶</span></div>
<div class="ln" style="left:13px;top:423px">137</div>
<div class="code" style="left:52px;top:423px"><span class="w">»   </span>config.<span class="f">authmode</span>=<span class="f"><i>AUTH_WPA2_PSK</i></span>;<span class="w">¶</span></div>
<div class="ln" style="left:13px;top:442px">138</div>
<div class="code" style="left:52px;top:442px"><span class="w">»   </span>wifi_softap_set_config(&amp;config);<span class="w">¶</span></div>
<div class="ln" style="left:13px;top:461px">139</div>
<div class="code" style="left:52px;top:461px"><span class="w">¶</span></div>
<div class="ln" style="left:13px;top:480px">140</div>
<div class="code" style="left:52px;top:480px"><span class="w">»   </span><span class="c">//<span class="cj">获</span><span class="cj">取</span><span class="la" style="letter-spacing:-0.17px">AP</span><span class="cj">的</span>IP<span class="cj">信</span><span class="cj">息</span></span><span class="w">¶</span></div>
<div class="ln" style="left:13px;top:499px">141</div>
<div class="code" style="left:52px;top:499px"><span class="w">»   </span>wifi_get_ip_info(SOFTAP_IF,&amp;ap_ip);<span class="w">¶</span></div>
<div class="ln" style="left:13px;top:518px">142</div>
<div class="code" style="left:52px;top:518px"><span class="w">»   </span>wifi_softap_dhcps_stop();<span class="w">¶</span></div>
<div class="ln" style="left:13px;top:537px">143</div>
<div class="code" style="left:52px;top:537px"><span class="w">»   </span>ap_ip.<span class="f">ip</span>.<span class="f">addr</span>=ipaddr_addr(<span class="s">&quot;192.168.100.1&quot;</span>);<span class="c">//<span class="cj">设</span><span class="cj">置</span><span class="cj">网</span><span class="cj">关</span><span class="cj">的</span>IP</span><span class="w">¶</span></div>
<div class="ln" style="left:13px;top:556px">144</div>
<div class="code" style="left:52px;top:556px"><span class="w">»   </span>wifi_set_ip_info(SOFTAP_IF,&amp;ap_ip);<span class="w">¶</span></div>
<div class="ln" style="left:13px;top:575px">145</div>
<div class="code" style="left:52px;top:575px"><span class="w">»   </span>wifi_softap_dhcps_start();<span class="c">//<span class="cj">启</span><span class="cj">动</span><span class="la" style="letter-spacing:-0.71px">DHCP</span><span class="cj">服</span><span class="cj">务</span><span class="cj">器</span>,<span class="cj">如</span><span class="cj">果</span><span class="cj">不</span><span class="cj">启</span><span class="cj">动</span><span class="cj">，</span><span class="cj">连</span><span class="cj">接</span><span class="cj">此</span><span class="la" style="letter-spacing:-0.17px">AP</span><span class="cj">的</span><span class="cj">终</span><span class="cj">端</span><span class="cj">取</span><span class="cj">不</span><span class="cj">到</span>IP</span><span class="w">¶</span></div>
<div class="ln" style="left:13px;top:594px">146</div>
<div class="code" style="left:52px;top:594px"><span class="w">¶</span></div>
<div class="ln" style="left:13px;top:613px">147</div>
<div class="code" style="left:52px;top:613px"><span class="w">»   </span>wifi_get_ip_info(SOFTAP_IF,&amp;ap_ip);<span class="w">¶</span></div>
<div class="ln" style="left:13px;top:632px">148</div>
<div class="code" style="left:52px;top:632px"><span class="w">»   </span>os_printf(<span class="s">&quot;\r\n------AP<span class="w">·</span>ip:%d.%d.%d.%d.---------\r\n&quot;</span>,<span class="w">¶</span></div>
<div class="ln" style="left:13px;top:651px">149</div>
<div class="code" style="left:52px;top:651px"><span class="w">»   </span><span class="w">»   </span><span class="w">»   </span>ip4_addr1(&amp;ap_ip.<span class="f">ip</span>.<span class="f">addr</span>),<span class="w">¶</span></div>
<div class="ln" style="left:13px;top:670px">150</div>
<div class="code" style="left:52px;top:670px"><span class="w">»   </span><span class="w">»   </span><span class="w">»   </span>ip4_addr2(&amp;ap_ip.<span class="f">ip</span>.<span class="f">addr</span>),<span class="w">¶</span></div>
<svg class="a" style="left:40px;top:235.5px" width="8" height="8" viewBox="0 0 9 9"><circle cx="4.500" cy="4.500" r="3.800" fill="#f4f6fa" stroke="#a5aab5"/><path d="M2.500 4.500h4" stroke="#8a8f9a"/></svg>
<div class="a" style="left:403px;top:384px;width:2px;height:17px;background:#000"></div>
<svg class="a" style="left:498px;top:385px" width="9" height="17" viewBox="0 0 9 17"><path d="M1.500 0.500h2.500l.5.500.5-.500h2.500M1.500 16.500h2.500l.5-.500.5.500h2.500M4.500 1v15" fill="none" stroke="#000" stroke-width="1"/></svg>
</div>
<div class="a" style="left:257px;top:796px;width:1141px;height:15px;background:#f0f0f0"></div>
<div class="a" style="left:1398px;top:105px;width:15px;height:707px;background:#f5f5f5"></div>
<div class="a" style="left:1400px;top:560px;width:9px;height:5px;border:1px solid #c4c4c4;background:#fff"></div>
<svg class="a" style="left:262px;top:798px" width="6" height="9" viewBox="0 0 6 9"><path d="M5 1L1.500 4.500 5 8" fill="none" stroke="#9a9a9a" stroke-width="1.800"/></svg>
<svg class="a" style="left:1370px;top:798px" width="6" height="9" viewBox="0 0 6 9"><path d="M1 1l3.500 3.500L1 8" fill="none" stroke="#9a9a9a" stroke-width="1.800"/></svg>
<div class="a" style="left:1418px;top:79px;width:320px;height:736px;background:#fff;border-radius:6px 0 0 6px;border:1px solid #eceef6"></div>
<div class="a" style="left:1420px;top:80px;width:123px;height:24px;background:linear-gradient(#eeeff4,#fff 80%);border-radius:6px 8px 0 0;box-shadow:1px 0 1px #dfe1ea"></div>
<svg class="a" style="left:1425px;top:86px" width="14" height="14" viewBox="0 0 14 14"><circle cx="7" cy="7" r="6" fill="#fff" stroke="#3f9a55" stroke-width="1.300"/><circle cx="7" cy="7" r="3.200" fill="#3f9a55"/><circle cx="7" cy="7" r="1.200" fill="#d8f0dc"/></svg>
<div class="t" style="left:1443px;top:86px;font-size:13px;letter-spacing:0.32px;word-spacing:-0.32px">Make Target</div>
<svg class="a" style="left:1525px;top:88px" width="11" height="11" viewBox="0 0 11 11"><path d="M1 1h2.5l2 2.2 2-2.2H10v1.2L7 5.5l3 3.3V10H7.5l-2-2.2-2 2.2H1V8.8l3-3.3-3-3.3z" fill="#fff" stroke="#555" stroke-width="1"/></svg>
<svg class="a" style="left:1600px;top:82px" width="128" height="20" viewBox="0 0 128 20"><g fill="none" stroke="#b4b4b4"><circle cx="9" cy="10.500" r="5.800" stroke-width="1.200"/><circle cx="9" cy="10.500" r="3.300" stroke-width="1"/></g><circle cx="9" cy="10.500" r="1.500" fill="#9a9a9a"/><path d="M12.500 6l2.500-2.500M13 3.500h2.500V6" stroke="#b9b9b9" stroke-width="1.200" fill="none"/><g fill="none" stroke="#b4b4b4"><circle cx="33" cy="10.500" r="5.800" stroke-width="1.200"/><circle cx="33" cy="10.500" r="3.300" stroke-width="1"/></g><rect x="31.500" y="9" width="3" height="3" fill="#9a9a9a"/><path d="M25.500 7.500l4 4.500" stroke="#b9b9b9" stroke-width="1.300"/><path d="M48.500 8.500c1-3.500 3.500-5 6.500-5h3l1 1.500-4 1 5.500 8-2.500 1.500-5.500-8c-1 .5-2 1-4 1z" fill="#bdbdbd" stroke="#a5a5a5" stroke-width=".6"/><circle cx="52" cy="12.500" r="3.300" fill="#fff" stroke="#b4b4b4"/><circle cx="52" cy="12.500" r="1" fill="#a5a5a5"/><path d="M69.500 2v18" stroke="#8a8a8a" stroke-width="1.200"/><path d="M80.500 11l6-6.500 6 6.500h-1.500v7h-9v-7z" fill="#fff" stroke="#a0a0a0" stroke-width="1.200"/><rect x="85" y="13.500" width="3" height="4.500" fill="#d5d5d5" stroke="#a8a8a8" stroke-width=".6"/><rect x="85.200" y="9.500" width="2.600" height="2.500" fill="none" stroke="#a8a8a8" stroke-width=".7"/><path d="M82.500 8V4.500h2V6" fill="none" stroke="#a0a0a0"/><path d="M102.500 10.500l6.500-5.500v3h6.500v5h-6.500v3z" fill="#f4f4f4" stroke="#b5b5b5" stroke-width="1.200"/><path d="M125.500 8.500h8v4.500h-8z" fill="#fff" stroke="#b5b5b5" stroke-width="1.200"/></svg>
<svg class="a" style="left:1429px;top:113px" width="6" height="9" viewBox="0 0 6 9"><path d="M1 1l3.500 3.500L1 8" fill="none" stroke="#a6a6a6" stroke-width="1.800"/></svg>
<svg class="a" style="left:1444px;top:108px" width="17" height="14" viewBox="0 0 17 14"><path d="M0.500 12V4.500c0-1.200.8-2 2-2h2.800l1.200 1.500h4" fill="#fdf4cc" stroke="#8d9cc0" stroke-width="1"/><path d="M0.500 12.500l3-6.500h10.500l-3 6.500z" fill="#bcd3f0" stroke="#4a6aa8" stroke-width="1"/><path d="M4 7l-2.500 5h8l2.500-5z" fill="#dce8f8" opacity=".6"/><path d="M14.800 2.300a2.400 2.400 0 1 0 0 3.600" fill="none" stroke="#1f3f80" stroke-width="1.600"/></svg>
<div class="t" style="left:1464px;top:109px;font-size:13px;letter-spacing:-0.31px;word-spacing:0.31px">10 ADC</div>
<svg class="a" style="left:1429px;top:133px" width="6" height="9" viewBox="0 0 6 9"><path d="M1 1l3.500 3.500L1 8" fill="none" stroke="#a6a6a6" stroke-width="1.800"/></svg>
<svg class="a" style="left:1444px;top:128px" width="17" height="14" viewBox="0 0 17 14"><path d="M0.500 12V4.500c0-1.200.8-2 2-2h2.800l1.200 1.500h4" fill="#fdf4cc" stroke="#8d9cc0" stroke-width="1"/><path d="M0.500 12.500l3-6.500h10.500l-3 6.500z" fill="#bcd3f0" stroke="#4a6aa8" stroke-width="1"/><path d="M4 7l-2.500 5h8l2.500-5z" fill="#dce8f8" opacity=".6"/><path d="M14.800 2.300a2.400 2.400 0 1 0 0 3.600" fill="none" stroke="#1f3f80" stroke-width="1.600"/></svg>
<div class="t" style="left:1464px;top:129px;font-size:13px;letter-spacing:0.26px;word-spacing:-0.26px">11 Uart</div>
<svg class="a" style="left:1429px;top:153px" width="6" height="9" viewBox="0 0 6 9"><path d="M1 1l3.500 3.500L1 8" fill="none" stroke="#a6a6a6" stroke-width="1.800"/></svg>
<svg class="a" style="left:1444px;top:148px" width="17" height="14" viewBox="0 0 17 14"><path d="M0.500 12V4.500c0-1.200.8-2 2-2h2.800l1.200 1.500h4" fill="#fdf4cc" stroke="#8d9cc0" stroke-width="1"/><path d="M0.500 12.500l3-6.500h10.500l-3 6.500z" fill="#bcd3f0" stroke="#4a6aa8" stroke-width="1"/><path d="M4 7l-2.500 5h8l2.500-5z" fill="#dce8f8" opacity=".6"/><path d="M14.800 2.300a2.400 2.400 0 1 0 0 3.600" fill="none" stroke="#1f3f80" stroke-width="1.600"/></svg>
<div class="t" style="left:1464px;top:149px;font-size:13px;letter-spacing:-0.08px;word-spacing:0.08px">12 flash</div>
<svg class="a" style="left:1429px;top:173px" width="6" height="9" viewBox="0 0 6 9"><path d="M1 1l3.500 3.500L1 8" fill="none" stroke="#a6a6a6" stroke-width="1.800"/></svg>
<svg class="a" style="left:1444px;top:168px" width="17" height="14" viewBox="0 0 17 14"><path d="M0.500 12V4.500c0-1.200.8-2 2-2h2.800l1.200 1.500h4" fill="#fdf4cc" stroke="#8d9cc0" stroke-width="1"/><path d="M0.500 12.500l3-6.500h10.500l-3 6.500z" fill="#bcd3f0" stroke="#4a6aa8" stroke-width="1"/><path d="M4 7l-2.500 5h8l2.500-5z" fill="#dce8f8" opacity=".6"/><path d="M14.800 2.300a2.400 2.400 0 1 0 0 3.600" fill="none" stroke="#1f3f80" stroke-width="1.600"/></svg>
<div class="t" style="left:1464px;top:169px;font-size:13px;letter-spacing:-0.27px;word-spacing:0.27px">13 PWM</div>
<svg class="a" style="left:1429px;top:193px" width="6" height="9" viewBox="0 0 6 9"><path d="M1 1l3.500 3.500L1 8" fill="none" stroke="#a6a6a6" stroke-width="1.800"/></svg>
<svg class="a" style="left:1444px;top:188px" width="17" height="14" viewBox="0 0 17 14"><path d="M0.500 12V4.500c0-1.200.8-2 2-2h2.800l1.200 1.500h4" fill="#fdf4cc" stroke="#8d9cc0" stroke-width="1"/><path d="M0.500 12.500l3-6.500h10.500l-3 6.500z" fill="#bcd3f0" stroke="#4a6aa8" stroke-width="1"/><path d="M4 7l-2.500 5h8l2.500-5z" fill="#dce8f8" opacity=".6"/><path d="M14.800 2.300a2.400 2.400 0 1 0 0 3.600" fill="none" stroke="#1f3f80" stroke-width="1.600"/></svg>
<div class="t" style="left:1464px;top:189px;font-size:13px;letter-spacing:-0.06px;word-spacing:0.06px">14 AT</div>
<svg class="a" style="left:1429px;top:213px" width="6" height="9" viewBox="0 0 6 9"><path d="M1 1l3.500 3.500L1 8" fill="none" stroke="#a6a6a6" stroke-width="1.800"/></svg>
<svg class="a" style="left:1444px;top:208px" width="17" height="14" viewBox="0 0 17 14"><path d="M0.500 12V4.500c0-1.200.8-2 2-2h2.800l1.200 1.500h4" fill="#fdf4cc" stroke="#8d9cc0" stroke-width="1"/><path d="M0.500 12.500l3-6.500h10.500l-3 6.500z" fill="#bcd3f0" stroke="#4a6aa8" stroke-width="1"/><path d="M4 7l-2.500 5h8l2.500-5z" fill="#dce8f8" opacity=".6"/><path d="M14.800 2.300a2.400 2.400 0 1 0 0 3.600" fill="none" stroke="#1f3f80" stroke-width="1.600"/></svg>
<div class="t" style="left:1464px;top:209px;font-size:13px;letter-spacing:-0.42px;word-spacing:0.42px">15 WiFi-STA</div>
<svg class="a" style="left:1429px;top:233px" width="6" height="9" viewBox="0 0 6 9"><path d="M1 1l3.500 3.500L1 8" fill="none" stroke="#a6a6a6" stroke-width="1.800"/></svg>
<svg class="a" style="left:1444px;top:228px" width="17" height="14" viewBox="0 0 17 14"><path d="M0.500 12V4.500c0-1.200.8-2 2-2h2.800l1.200 1.500h4" fill="#fdf4cc" stroke="#8d9cc0" stroke-width="1"/><path d="M0.500 12.500l3-6.500h10.500l-3 6.500z" fill="#bcd3f0" stroke="#4a6aa8" stroke-width="1"/><path d="M4 7l-2.500 5h8l2.500-5z" fill="#dce8f8" opacity=".6"/><path d="M14.800 2.300a2.400 2.400 0 1 0 0 3.600" fill="none" stroke="#1f3f80" stroke-width="1.600"/></svg>
<div class="t" style="left:1464px;top:229px;font-size:13px;letter-spacing:-0.41px;word-spacing:0.41px">16 WiFi-AP</div>
<svg class="a" style="left:1429px;top:253px" width="6" height="9" viewBox="0 0 6 9"><path d="M1 1l3.500 3.500L1 8" fill="none" stroke="#a6a6a6" stroke-width="1.800"/></svg>
<svg class="a" style="left:1444px;top:248px" width="17" height="14" viewBox="0 0 17 14"><path d="M0.500 12V4.500c0-1.200.8-2 2-2h2.800l1.200 1.500h4" fill="#fdf4cc" stroke="#8d9cc0" stroke-width="1"/><path d="M0.500 12.500l3-6.500h10.500l-3 6.500z" fill="#bcd3f0" stroke="#4a6aa8" stroke-width="1"/><path d="M4 7l-2.500 5h8l2.500-5z" fill="#dce8f8" opacity=".6"/><path d="M14.800 2.300a2.400 2.400 0 1 0 0 3.600" fill="none" stroke="#1f3f80" stroke-width="1.600"/></svg>
<div class="t" style="left:1464px;top:249px;font-size:13px;letter-spacing:-0.45px;word-spacing:0.45px">17 UDP</div>
<svg class="a" style="left:1429px;top:273px" width="6" height="9" viewBox="0 0 6 9"><path d="M1 1l3.500 3.500L1 8" fill="none" stroke="#a6a6a6" stroke-width="1.800"/></svg>
<svg class="a" style="left:1444px;top:268px" width="17" height="14" viewBox="0 0 17 14"><path d="M0.500 12V4.500c0-1.200.8-2 2-2h2.800l1.200 1.500h4" fill="#fdf4cc" stroke="#8d9cc0" stroke-width="1"/><path d="M0.500 12.500l3-6.500h10.500l-3 6.500z" fill="#bcd3f0" stroke="#4a6aa8" stroke-width="1"/><path d="M4 7l-2.500 5h8l2.500-5z" fill="#dce8f8" opacity=".6"/><path d="M14.800 2.300a2.400 2.400 0 1 0 0 3.600" fill="none" stroke="#1f3f80" stroke-width="1.600"/></svg>
<div class="t" style="left:1464px;top:269px;font-size:13px;letter-spacing:-0.66px;word-spacing:0.66px">18 TCP-CLIENT</div>
<svg class="a" style="left:1429px;top:293px" width="6" height="9" viewBox="0 0 6 9"><path d="M1 1l3.500 3.500L1 8" fill="none" stroke="#a6a6a6" stroke-width="1.800"/></svg>
<svg class="a" style="left:1444px;top:288px" width="17" height="14" viewBox="0 0 17 14"><path d="M0.500 12V4.500c0-1.200.8-2 2-2h2.800l1.200 1.500h4" fill="#fdf4cc" stroke="#8d9cc0" stroke-width="1"/><path d="M0.500 12.500l3-6.500h10.500l-3 6.500z" fill="#bcd3f0" stroke="#4a6aa8" stroke-width="1"/><path d="M4 7l-2.500 5h8l2.500-5z" fill="#dce8f8" opacity=".6"/><path d="M14.800 2.300a2.400 2.400 0 1 0 0 3.600" fill="none" stroke="#1f3f80" stroke-width="1.600"/></svg>
<div class="t" style="left:1464px;top:289px;font-size:13px;letter-spacing:-0.99px;word-spacing:0.99px">19 TCP-SERVER</div>
<svg class="a" style="left:1429px;top:313px" width="6" height="9" viewBox="0 0 6 9"><path d="M1 1l3.500 3.500L1 8" fill="none" stroke="#a6a6a6" stroke-width="1.800"/></svg>
<svg class="a" style="left:1444px;top:308px" width="17" height="14" viewBox="0 0 17 14"><path d="M0.500 12V4.500c0-1.200.8-2 2-2h2.800l1.200 1.500h4" fill="#fdf4cc" stroke="#8d9cc0" stroke-width="1"/><path d="M0.500 12.500l3-6.500h10.500l-3 6.500z" fill="#bcd3f0" stroke="#4a6aa8" stroke-width="1"/><path d="M4 7l-2.500 5h8l2.500-5z" fill="#dce8f8" opacity=".6"/><path d="M14.800 2.300a2.400 2.400 0 1 0 0 3.600" fill="none" stroke="#1f3f80" stroke-width="1.600"/></svg>
<div class="t" style="left:1464px;top:309px;font-size:13px;letter-spacing:-0.40px;word-spacing:0.40px">20 DNS</div>
<svg class="a" style="left:1429px;top:333px" width="6" height="9" viewBox="0 0 6 9"><path d="M1 1l3.500 3.500L1 8" fill="none" stroke="#a6a6a6" stroke-width="1.800"/></svg>
<svg class="a" style="left:1444px;top:328px" width="17" height="14" viewBox="0 0 17 14"><path d="M0.500 12V4.500c0-1.200.8-2 2-2h2.800l1.200 1.500h4" fill="#fdf4cc" stroke="#8d9cc0" stroke-width="1"/><path d="M0.500 12.500l3-6.500h10.500l-3 6.500z" fill="#bcd3f0" stroke="#4a6aa8" stroke-width="1"/><path d="M4 7l-2.500 5h8l2.500-5z" fill="#dce8f8" opacity=".6"/><path d="M14.800 2.300a2.400 2.400 0 1 0 0 3.600" fill="none" stroke="#1f3f80" stroke-width="1.600"/></svg>
<div class="t" style="left:1464px;top:329px;font-size:13px;letter-spacing:-0.23px;word-spacing:0.23px">21 http-GET</div>
<svg class="a" style="left:1429px;top:353px" width="6" height="9" viewBox="0 0 6 9"><path d="M1 1l3.500 3.500L1 8" fill="none" stroke="#a6a6a6" stroke-width="1.800"/></svg>
<svg class="a" style="left:1444px;top:348px" width="17" height="14" viewBox="0 0 17 14"><path d="M0.500 12V4.500c0-1.200.8-2 2-2h2.800l1.200 1.500h4" fill="#fdf4cc" stroke="#8d9cc0" stroke-width="1"/><path d="M0.500 12.500l3-6.500h10.500l-3 6.500z" fill="#bcd3f0" stroke="#4a6aa8" stroke-width="1"/><path d="M4 7l-2.500 5h8l2.500-5z" fill="#dce8f8" opacity=".6"/><path d="M14.800 2.300a2.400 2.400 0 1 0 0 3.600" fill="none" stroke="#1f3f80" stroke-width="1.600"/></svg>
<div class="t" style="left:1464px;top:349px;font-size:13px;letter-spacing:-0.18px;word-spacing:0.18px">22 WebService</div>
<svg class="a" style="left:1429px;top:373px" width="6" height="9" viewBox="0 0 6 9"><path d="M1 1l3.500 3.500L1 8" fill="none" stroke="#a6a6a6" stroke-width="1.800"/></svg>
<svg class="a" style="left:1444px;top:368px" width="17" height="14" viewBox="0 0 17 14"><path d="M0.500 12V4.500c0-1.200.8-2 2-2h2.800l1.200 1.500h4" fill="#fdf4cc" stroke="#8d9cc0" stroke-width="1"/><path d="M0.500 12.500l3-6.500h10.500l-3 6.500z" fill="#bcd3f0" stroke="#4a6aa8" stroke-width="1"/><path d="M4 7l-2.500 5h8l2.500-5z" fill="#dce8f8" opacity=".6"/><path d="M14.800 2.300a2.400 2.400 0 1 0 0 3.600" fill="none" stroke="#1f3f80" stroke-width="1.600"/></svg>
<div class="t" style="left:1464px;top:369px;font-size:13px;letter-spacing:-0.33px;word-spacing:0.33px">23 WebService-POST</div>
<svg class="a" style="left:1429px;top:393px" width="6" height="9" viewBox="0 0 6 9"><path d="M1 1l3.500 3.500L1 8" fill="none" stroke="#a6a6a6" stroke-width="1.800"/></svg>
<svg class="a" style="left:1444px;top:388px" width="17" height="14" viewBox="0 0 17 14"><path d="M0.500 12V4.500c0-1.200.8-2 2-2h2.800l1.200 1.500h4" fill="#fdf4cc" stroke="#8d9cc0" stroke-width="1"/><path d="M0.500 12.500l3-6.500h10.500l-3 6.500z" fill="#bcd3f0" stroke="#4a6aa8" stroke-width="1"/><path d="M4 7l-2.500 5h8l2.500-5z" fill="#dce8f8" opacity=".6"/><path d="M14.800 2.300a2.400 2.400 0 1 0 0 3.600" fill="none" stroke="#1f3f80" stroke-width="1.600"/></svg>
<div class="t" style="left:1464px;top:389px;font-size:13px;letter-spacing:-0.67px;word-spacing:0.67px">24 SNTP</div>
<svg class="a" style="left:1429px;top:413px" width="6" height="9" viewBox="0 0 6 9"><path d="M1 1l3.500 3.500L1 8" fill="none" stroke="#a6a6a6" stroke-width="1.800"/></svg>
<svg class="a" style="left:1444px;top:408px" width="17" height="14" viewBox="0 0 17 14"><path d="M0.500 12V4.500c0-1.200.8-2 2-2h2.800l1.200 1.500h4" fill="#fdf4cc" stroke="#8d9cc0" stroke-width="1"/><path d="M0.500 12.500l3-6.500h10.500l-3 6.500z" fill="#bcd3f0" stroke="#4a6aa8" stroke-width="1"/><path d="M4 7l-2.500 5h8l2.500-5z" fill="#dce8f8" opacity=".6"/><path d="M14.800 2.300a2.400 2.400 0 1 0 0 3.600" fill="none" stroke="#1f3f80" stroke-width="1.600"/></svg>
<div class="t" style="left:1464px;top:409px;font-size:13px;letter-spacing:-0.03px;word-spacing:0.03px">25 sleep(Light-sleep)</div>
<svg class="a" style="left:1429px;top:433px" width="6" height="9" viewBox="0 0 6 9"><path d="M1 1l3.500 3.500L1 8" fill="none" stroke="#a6a6a6" stroke-width="1.800"/></svg>
<svg class="a" style="left:1444px;top:428px" width="17" height="14" viewBox="0 0 17 14"><path d="M0.500 12V4.500c0-1.200.8-2 2-2h2.800l1.200 1.500h4" fill="#fdf4cc" stroke="#8d9cc0" stroke-width="1"/><path d="M0.500 12.500l3-6.500h10.500l-3 6.500z" fill="#bcd3f0" stroke="#4a6aa8" stroke-width="1"/><path d="M4 7l-2.500 5h8l2.500-5z" fill="#dce8f8" opacity=".6"/><path d="M14.800 2.300a2.400 2.400 0 1 0 0 3.600" fill="none" stroke="#1f3f80" stroke-width="1.600"/></svg>
<div class="t" style="left:1464px;top:429px;font-size:13px;letter-spacing:0.21px;word-spacing:-0.21px">2 Hello world</div>
<svg class="a" style="left:1429px;top:453px" width="6" height="9" viewBox="0 0 6 9"><path d="M1 1l3.500 3.500L1 8" fill="none" stroke="#a6a6a6" stroke-width="1.800"/></svg>
<svg class="a" style="left:1444px;top:448px" width="17" height="14" viewBox="0 0 17 14"><path d="M0.500 12V4.500c0-1.200.8-2 2-2h2.800l1.200 1.500h4" fill="#fdf4cc" stroke="#8d9cc0" stroke-width="1"/><path d="M0.500 12.500l3-6.500h10.500l-3 6.500z" fill="#bcd3f0" stroke="#4a6aa8" stroke-width="1"/><path d="M4 7l-2.500 5h8l2.500-5z" fill="#dce8f8" opacity=".6"/><path d="M14.800 2.300a2.400 2.400 0 1 0 0 3.600" fill="none" stroke="#1f3f80" stroke-width="1.600"/></svg>
<div class="t" style="left:1464px;top:449px;font-size:13px;letter-spacing:-0.03px;word-spacing:0.03px">30 sample-1</div>
<svg class="a" style="left:1429px;top:473px" width="6" height="9" viewBox="0 0 6 9"><path d="M1 1l3.500 3.500L1 8" fill="none" stroke="#a6a6a6" stroke-width="1.800"/></svg>
<svg class="a" style="left:1444px;top:468px" width="17" height="14" viewBox="0 0 17 14"><path d="M0.500 12V4.500c0-1.200.8-2 2-2h2.800l1.200 1.500h4" fill="#fdf4cc" stroke="#8d9cc0" stroke-width="1"/><path d="M0.500 12.500l3-6.500h10.500l-3 6.500z" fill="#bcd3f0" stroke="#4a6aa8" stroke-width="1"/><path d="M4 7l-2.500 5h8l2.500-5z" fill="#dce8f8" opacity=".6"/><path d="M14.800 2.300a2.400 2.400 0 1 0 0 3.600" fill="none" stroke="#1f3f80" stroke-width="1.600"/></svg>
<div class="t" style="left:1464px;top:469px;font-size:13px;letter-spacing:0.05px;word-spacing:-0.05px">30 sample-2</div>
<svg class="a" style="left:1429px;top:493px" width="6" height="9" viewBox="0 0 6 9"><path d="M1 1l3.500 3.500L1 8" fill="none" stroke="#a6a6a6" stroke-width="1.800"/></svg>
<svg class="a" style="left:1444px;top:488px" width="17" height="14" viewBox="0 0 17 14"><path d="M0.500 12V4.500c0-1.200.8-2 2-2h2.800l1.200 1.500h4" fill="#fdf4cc" stroke="#8d9cc0" stroke-width="1"/><path d="M0.500 12.500l3-6.500h10.500l-3 6.500z" fill="#bcd3f0" stroke="#4a6aa8" stroke-width="1"/><path d="M4 7l-2.500 5h8l2.500-5z" fill="#dce8f8" opacity=".6"/><path d="M14.800 2.300a2.400 2.400 0 1 0 0 3.600" fill="none" stroke="#1f3f80" stroke-width="1.600"/></svg>
<div class="t" style="left:1464px;top:489px;font-size:13px;letter-spacing:-0.38px;word-spacing:0.38px">3 TIMER</div>
<svg class="a" style="left:1429px;top:513px" width="6" height="9" viewBox="0 0 6 9"><path d="M1 1l3.500 3.500L1 8" fill="none" stroke="#a6a6a6" stroke-width="1.800"/></svg>
<svg class="a" style="left:1444px;top:508px" width="17" height="14" viewBox="0 0 17 14"><path d="M0.500 12V4.500c0-1.200.8-2 2-2h2.800l1.200 1.500h4" fill="#fdf4cc" stroke="#8d9cc0" stroke-width="1"/><path d="M0.500 12.500l3-6.500h10.500l-3 6.500z" fill="#bcd3f0" stroke="#4a6aa8" stroke-width="1"/><path d="M4 7l-2.500 5h8l2.500-5z" fill="#dce8f8" opacity=".6"/><path d="M14.800 2.300a2.400 2.400 0 1 0 0 3.600" fill="none" stroke="#1f3f80" stroke-width="1.600"/></svg>
<div class="t" style="left:1464px;top:509px;font-size:13px;letter-spacing:-0.85px;word-spacing:0.85px">4 LED</div>
<svg class="a" style="left:1429px;top:533px" width="6" height="9" viewBox="0 0 6 9"><path d="M1 1l3.500 3.500L1 8" fill="none" stroke="#a6a6a6" stroke-width="1.800"/></svg>
<svg class="a" style="left:1444px;top:528px" width="17" height="14" viewBox="0 0 17 14"><path d="M0.500 12V4.500c0-1.200.8-2 2-2h2.800l1.200 1.500h4" fill="#fdf4cc" stroke="#8d9cc0" stroke-width="1"/><path d="M0.500 12.500l3-6.500h10.500l-3 6.500z" fill="#bcd3f0" stroke="#4a6aa8" stroke-width="1"/><path d="M4 7l-2.500 5h8l2.500-5z" fill="#dce8f8" opacity=".6"/><path d="M14.800 2.300a2.400 2.400 0 1 0 0 3.600" fill="none" stroke="#1f3f80" stroke-width="1.600"/></svg>
<div class="t" style="left:1464px;top:529px;font-size:13px;letter-spacing:0.04px;word-spacing:-0.04px">5 key</div>
<svg class="a" style="left:1429px;top:553px" width="6" height="9" viewBox="0 0 6 9"><path d="M1 1l3.500 3.500L1 8" fill="none" stroke="#a6a6a6" stroke-width="1.800"/></svg>
<svg class="a" style="left:1444px;top:548px" width="17" height="14" viewBox="0 0 17 14"><path d="M0.500 12V4.500c0-1.200.8-2 2-2h2.800l1.200 1.500h4" fill="#fdf4cc" stroke="#8d9cc0" stroke-width="1"/><path d="M0.500 12.500l3-6.500h10.500l-3 6.500z" fill="#bcd3f0" stroke="#4a6aa8" stroke-width="1"/><path d="M4 7l-2.500 5h8l2.500-5z" fill="#dce8f8" opacity=".6"/><path d="M14.800 2.300a2.400 2.400 0 1 0 0 3.600" fill="none" stroke="#1f3f80" stroke-width="1.600"/></svg>
<div class="t" style="left:1464px;top:549px;font-size:13px;letter-spacing:-0.02px;word-spacing:0.02px">6 buzzer</div>
<svg class="a" style="left:1429px;top:573px" width="6" height="9" viewBox="0 0 6 9"><path d="M1 1l3.500 3.500L1 8" fill="none" stroke="#a6a6a6" stroke-width="1.800"/></svg>
<svg class="a" style="left:1444px;top:568px" width="17" height="14" viewBox="0 0 17 14"><path d="M0.500 12V4.500c0-1.200.8-2 2-2h2.800l1.200 1.500h4" fill="#fdf4cc" stroke="#8d9cc0" stroke-width="1"/><path d="M0.500 12.500l3-6.500h10.500l-3 6.500z" fill="#bcd3f0" stroke="#4a6aa8" stroke-width="1"/><path d="M4 7l-2.500 5h8l2.500-5z" fill="#dce8f8" opacity=".6"/><path d="M14.800 2.300a2.400 2.400 0 1 0 0 3.600" fill="none" stroke="#1f3f80" stroke-width="1.600"/></svg>
<div class="t" style="left:1464px;top:569px;font-size:13px;letter-spacing:0.04px;word-spacing:-0.04px">7 relay</div>
<svg class="a" style="left:1429px;top:593px" width="6" height="9" viewBox="0 0 6 9"><path d="M1 1l3.500 3.500L1 8" fill="none" stroke="#a6a6a6" stroke-width="1.800"/></svg>
<svg class="a" style="left:1444px;top:588px" width="17" height="14" viewBox="0 0 17 14"><path d="M0.500 12V4.500c0-1.200.8-2 2-2h2.800l1.200 1.500h4" fill="#fdf4cc" stroke="#8d9cc0" stroke-width="1"/><path d="M0.500 12.500l3-6.500h10.500l-3 6.500z" fill="#bcd3f0" stroke="#4a6aa8" stroke-width="1"/><path d="M4 7l-2.500 5h8l2.500-5z" fill="#dce8f8" opacity=".6"/><path d="M14.800 2.300a2.400 2.400 0 1 0 0 3.600" fill="none" stroke="#1f3f80" stroke-width="1.600"/></svg>
<div class="t" style="left:1464px;top:589px;font-size:13px;letter-spacing:-0.34px;word-spacing:0.34px">8 DHT11</div>
<svg class="a" style="left:1429px;top:613px" width="6" height="9" viewBox="0 0 6 9"><path d="M1 1l3.500 3.500L1 8" fill="none" stroke="#a6a6a6" stroke-width="1.800"/></svg>
<svg class="a" style="left:1444px;top:608px" width="17" height="14" viewBox="0 0 17 14"><path d="M0.500 12V4.500c0-1.200.8-2 2-2h2.800l1.200 1.500h4" fill="#fdf4cc" stroke="#8d9cc0" stroke-width="1"/><path d="M0.500 12.500l3-6.500h10.500l-3 6.500z" fill="#bcd3f0" stroke="#4a6aa8" stroke-width="1"/><path d="M4 7l-2.500 5h8l2.500-5z" fill="#dce8f8" opacity=".6"/><path d="M14.800 2.300a2.400 2.400 0 1 0 0 3.600" fill="none" stroke="#1f3f80" stroke-width="1.600"/></svg>
<div class="t" style="left:1464px;top:609px;font-size:13px;letter-spacing:0.06px;word-spacing:-0.06px">9 task</div>
<svg class="a" style="left:1429px;top:633px" width="6" height="9" viewBox="0 0 6 9"><path d="M1 1l3.500 3.500L1 8" fill="none" stroke="#a6a6a6" stroke-width="1.800"/></svg>
<svg class="a" style="left:1444px;top:628px" width="17" height="14" viewBox="0 0 17 14"><path d="M0.500 12V4.500c0-1.200.8-2 2-2h2.800l1.200 1.500h4" fill="#fdf4cc" stroke="#8d9cc0" stroke-width="1"/><path d="M0.500 12.500l3-6.500h10.500l-3 6.500z" fill="#bcd3f0" stroke="#4a6aa8" stroke-width="1"/><path d="M4 7l-2.500 5h8l2.500-5z" fill="#dce8f8" opacity=".6"/><path d="M14.800 2.300a2.400 2.400 0 1 0 0 3.600" fill="none" stroke="#1f3f80" stroke-width="1.600"/></svg>
<div class="t" style="left:1464px;top:629px;font-size:13px;letter-spacing:-0.70px;word-spacing:0.70px">ESP8266_NONOS_SDK-2.2.1</div>
<svg class="a" style="left:1429px;top:653px" width="6" height="9" viewBox="0 0 6 9"><path d="M1 1l3.500 3.500L1 8" fill="none" stroke="#a6a6a6" stroke-width="1.800"/></svg>
<svg class="a" style="left:1444px;top:648px" width="17" height="14" viewBox="0 0 17 14"><path d="M0.500 12V4.500c0-1.200.8-2 2-2h2.800l1.200 1.500h4" fill="#fdf4cc" stroke="#8d9cc0" stroke-width="1"/><path d="M0.500 12.500l3-6.500h10.500l-3 6.500z" fill="#bcd3f0" stroke="#4a6aa8" stroke-width="1"/><path d="M4 7l-2.500 5h8l2.500-5z" fill="#dce8f8" opacity=".6"/><path d="M14.800 2.300a2.400 2.400 0 1 0 0 3.600" fill="none" stroke="#1f3f80" stroke-width="1.600"/></svg>
<div class="t" style="left:1464px;top:649px;font-size:13px;letter-spacing:0.35px;word-spacing:-0.35px">esp-idf</div>
<svg class="a" style="left:1429px;top:673px" width="6" height="9" viewBox="0 0 6 9"><path d="M1 1l3.500 3.500L1 8" fill="none" stroke="#a6a6a6" stroke-width="1.800"/></svg>
<svg class="a" style="left:1444px;top:668px" width="17" height="14" viewBox="0 0 17 14"><path d="M0.500 12V4.500c0-1.200.8-2 2-2h2.800l1.200 1.500h4" fill="#fdf4cc" stroke="#8d9cc0" stroke-width="1"/><path d="M0.500 12.500l3-6.500h10.500l-3 6.500z" fill="#bcd3f0" stroke="#4a6aa8" stroke-width="1"/><path d="M4 7l-2.500 5h8l2.500-5z" fill="#dce8f8" opacity=".6"/><path d="M14.800 2.300a2.400 2.400 0 1 0 0 3.600" fill="none" stroke="#1f3f80" stroke-width="1.600"/></svg>
<div class="t" style="left:1464px;top:669px;font-size:13px;letter-spacing:0.22px;word-spacing:-0.22px">helloworld</div>
<div class="a" style="left:1696px;top:455px;width:50px;height:49px;border-radius:50%;background:#cdeedd;box-shadow:0 1px 3px 1px rgba(60,60,70,.55)"></div>
<div class="a" style="left:1698px;top:457px;width:46px;height:45px;border-radius:50%;background:linear-gradient(#0c6e44 0,#178a56 25%,#0e7a4a 49%,#3fca66 51%,#3cc462 100%);box-shadow:inset 0 0 2px #0a5a38"></div>
<div class="a" style="left:1711px;top:460px;width:20px;height:5px;border-radius:50%;background:rgba(220,255,235,.55);filter:blur(1px)"></div>
<div class="t" style="left:1706px;top:471px;font-size:13.500px;letter-spacing:.8px;color:#d6fbe6;font-family:'Liberation Sans',sans-serif">51%</div>
<div class="a" style="left:206px;top:819px;width:1530px;height:190px;background:#fff;border-radius:6px 0 0 6px;border:1px solid #eceef6"></div>
<div class="a" style="left:208px;top:820px;width:93px;height:24px;background:linear-gradient(#eeeff4,#fff 80%);border-radius:6px 8px 0 0;box-shadow:1px 0 1px #dfe1ea"></div>
<svg class="a" style="left:213px;top:826px" width="13.500" height="13.500" viewBox="0 0 15 15"><rect x="1" y="1" width="13" height="10" rx="1.500" fill="#dfe6f3" stroke="#33486e" stroke-width="1.800"/><path d="M4 4.500h7M4 7.500h5" stroke="#33486e" stroke-width="1.200"/><path d="M3 13.800h9" stroke="#33486e" stroke-width="1.600"/><path d="M5 11.500h5v2H5z" fill="#33486e"/></svg>
<div class="t" style="left:230px;top:826px;font-size:13px"><span style="letter-spacing:-.500px">C</span><span style="letter-spacing:.150px">onsole</span></div>
<svg class="a" style="left:284px;top:828px" width="11" height="11" viewBox="0 0 11 11"><path d="M1 1h2.5l2 2.2 2-2.2H10v1.2L7 5.5l3 3.3V10H7.5l-2-2.2-2 2.2H1V8.8l3-3.3-3-3.3z" fill="#fff" stroke="#555" stroke-width="1"/></svg>
<svg class="a" style="left:306px;top:825px" width="16" height="15" viewBox="0 0 16 15"><rect x="4" y="2" width="10" height="12" fill="#f0f0f0" stroke="#b5b5b5"/><rect x="6" y="0.500" width="6" height="3" fill="#d5d5d5" stroke="#b5b5b5"/><path d="M6 7h6M6 10h6" stroke="#c5c5c5"/><path d="M1 8l2.500 3 4-5" fill="none" stroke="#8ab0d8" stroke-width="1.500"/></svg>
<div class="t" style="left:326px;top:826px;font-size:13px;color:#9a9a9a"><span style="letter-spacing:-.500px">T</span><span style="letter-spacing:.150px">asks</span></div>
<div class="t" style="left:209px;top:848px;font-size:13px;letter-spacing:-0.19px;word-spacing:0.19px">CDT Build Console [16 WiFi-AP]</div>
<div class="a" style="left:209px;top:864px;width:1519px;height:1px;background:#a0a0a0"></div>
<div class="a" style="left:208px;top:992px;width:1520px;height:15px;background:#f0f0f0"></div>
<svg class="a" style="left:214px;top:995px" width="6" height="9" viewBox="0 0 6 9"><path d="M5 1L1.500 4.500 5 8" fill="none" stroke="#b5b5b5" stroke-width="1.800"/></svg>
<svg class="a" style="left:1485px;top:821px" width="243" height="22" viewBox="0 0 243 22"><g transform="translate(2 0)"><path d="M9 3h5v7h3.500l-6 6.500-6-6.500H9z" fill="#fde580" stroke="#c09a20"/><path d="M32 17h5v-7h3.500l-6-6.500-6 6.500H32z" fill="#fde580" stroke="#c09a20"/></g><rect x="48.500" y="0.500" width="22" height="21" fill="#cfe3f8" stroke="#9cc0e8"/><path d="M65 5.500h-7V3l-5 4 5 4V8.500h7z" fill="#fdf0a0" stroke="#b8982a"/><path d="M55 13h7v-2.500l5 4-5 4V16h-7z" fill="#fdf0a0" stroke="#b8982a"/><path d="M73.500 2v19" stroke="#8a8a8a"/><g transform="translate(-4 0)"><rect x="87" y="4" width="9" height="13" fill="#e8e8ee" stroke="#9aa0b0"/><rect x="96" y="4" width="5" height="13" fill="#8a90a0"/><rect x="97.500" y="6" width="2" height="2" fill="#fff"/><rect x="97.500" y="12" width="2" height="2" fill="#fff"/><rect x="110" y="4" width="9" height="13" fill="#e8e8ee" stroke="#9aa0b0"/><rect x="119" y="4" width="5" height="13" fill="#8a90a0"/><rect x="120.500" y="6" width="2" height="2" fill="#fff"/><rect x="120.500" y="12" width="2" height="2" fill="#fff"/><rect x="108" y="11" width="7" height="6" fill="#f2cc3e" stroke="#a88414"/><path d="M109.500 11v-2a2 2 0 0 1 4 0v2" fill="none" stroke="#a88414"/></g><path d="M132 6h11M132 9h8M132 12h5" stroke="#c5c5c5"/><g transform="translate(-1.500 0)"><rect x="154" y="4" width="9" height="12" fill="#f2f2f2" stroke="#9a9a9a"/><path d="M156 7h5M156 9.500h5M156 12h5" stroke="#7a7a7a"/><path d="M161 12l6 6M167 12l-6 6" stroke="#8a8a8a" stroke-width="1.800"/></g><path d="M173.500 2v19" stroke="#8a8a8a"/><rect x="184" y="7" width="13" height="10" fill="#d8e8f8" stroke="#2f5a9a"/><rect x="184" y="7" width="13" height="3" fill="#2f5a9a"/><path d="M192 9l5-5" stroke="#2a8a3a" stroke-width="2"/><circle cx="197" cy="4" r="2" fill="#2a8a3a"/><rect x="208" y="3" width="13" height="10" rx="1" fill="#fff" stroke="#2f5a9a" stroke-width="1.600"/><path d="M211 6.500h7M211 9.500h5" stroke="#2f5a9a"/><path d="M210 15.500h9" stroke="#333" stroke-width="1.500"/><path d="M230 8h7l-3.500 4z" fill="#111"/></svg>
<div class="a" style="left:0px;top:1008px;width:1728px;height:32px;background:linear-gradient(#fff 0,#fff 3px,#e1e2f5 3.500px,#dfe2f6 8px,#dee4f3 14px,#dee4f3 30.500px,#fff 31px)"></div>
<div class="a" style="left:1241px;top:1012px;width:2px;height:25px;background:linear-gradient(90deg,#a8acbf 50%,#f6f7fd 50%)"></div>
<div class="a" style="left:1345px;top:1012px;width:2px;height:25px;background:linear-gradient(90deg,#a8acbf 50%,#f6f7fd 50%)"></div>
<div class="a" style="left:1443px;top:1012px;width:2px;height:25px;background:linear-gradient(90deg,#a8acbf 50%,#f6f7fd 50%)"></div>
<div class="a" style="left:1540px;top:1016px;width:1px;height:20px;background:repeating-linear-gradient(#8a8fa0 0 1px,transparent 1px 4px)"></div>
<div class="t" style="left:1249px;top:1017px;font-size:13px"><span style="letter-spacing:-.500px">W</span><span style="letter-spacing:.150px">ritable</span></div>
<div class="t" style="left:1353px;top:1017px;font-size:13px"><span style="letter-spacing:-.500px">S</span><span style="letter-spacing:.150px">mart</span> <span style="letter-spacing:-.500px">I</span><span style="letter-spacing:.150px">nsert</span></div>
<div class="t" style="left:1451px;top:1017px;font-size:13px"><span style="letter-spacing:-.300px">135</span> : <span style="letter-spacing:-.300px">40</span></div>
<div class="a" style="left:616px;top:988px;width:592px;height:18px;background:linear-gradient(#d5e9e1 0,#fbfdfc 25%,#e3f0eb 50%,#9ecab9 100%)"></div>
<div class="a" style="left:616px;top:1006px;width:592px;height:18px;background:linear-gradient(#b5d7ca 0,#e6f3ee 30%,#cfe6dd 60%,#9ecab9 100%)"></div>
<div class="t" style="left:617px;top:988px;font-family:'Noto Serif CJK SC',serif;font-weight:900;font-style:italic;font-size:16px;color:#6a1418;letter-spacing:1.200px;text-shadow:1px 1px 1px #3a3a3a;line-height:17px;height:17px">智能五笔</div>
<div class="a" style="left:690px;top:991px;width:11px;height:11px;background:#1428d8;border-radius:50%"></div>
<svg class="a" style="left:706px;top:990px" width="18" height="13" viewBox="0 0 18 13"><rect x="0.500" y="0.500" width="17" height="12" fill="#a8cdf0" stroke="#8ab0dc"/><path d="M2 3.500h14M2 6.500h14" stroke="#fff" stroke-dasharray="2 1" stroke-width="1.500"/><path d="M4 9.500h10" stroke="#fff" stroke-width="1.500"/></svg>
<div class="t" style="left:736px;top:989px;font-size:16px;color:#2f6c98;font-family:'Noto Serif CJK SC',serif;line-height:18px;height:18px;top:988px">智能陈桥汉字输入系统<span style="display:inline-block;width:8px;text-align:center;font-family:'Liberation Serif',serif;font-size:15px">7</span><span style="display:inline-block;width:8px;text-align:center;font-family:'Liberation Serif',serif;font-size:15px">.</span><span style="display:inline-block;width:8px;text-align:center;font-family:'Liberation Serif',serif;font-size:15px">1</span>版<span style="display:inline-block;width:8px;text-align:center;font-family:'Liberation Serif',serif;font-size:15px">&nbsp;</span><span style="display:inline-block;width:8px;text-align:center;font-family:'Liberation Serif',serif;font-size:15px">&nbsp;</span><span style="display:inline-block;width:8px;text-align:center;font-family:'Liberation Serif',serif;font-size:15px">&nbsp;</span>作者：陈虎</div>
<div class="t" style="left:657px;top:1007px;font-size:16px;color:#2f6c98;font-family:'Noto Serif CJK SC',serif;line-height:18px;height:18px;top:1006px">智能陈桥主页：<span style="display:inline-block;width:8px;text-align:center;font-family:'Liberation Serif',serif;font-size:15px">h</span><span style="display:inline-block;width:8px;text-align:center;font-family:'Liberation Serif',serif;font-size:15px">t</span><span style="display:inline-block;width:8px;text-align:center;font-family:'Liberation Serif',serif;font-size:15px">t</span><span style="display:inline-block;width:8px;text-align:center;font-family:'Liberation Serif',serif;font-size:15px">p</span><span style="display:inline-block;width:8px;text-align:center;font-family:'Liberation Serif',serif;font-size:15px">:</span><span style="display:inline-block;width:8px;text-align:center;font-family:'Liberation Serif',serif;font-size:15px">/</span><span style="display:inline-block;width:8px;text-align:center;font-family:'Liberation Serif',serif;font-size:15px">/</span><span style="display:inline-block;width:8px;text-align:center;font-family:'Liberation Serif',serif;font-size:15px">w</span><span style="display:inline-block;width:8px;text-align:center;font-family:'Liberation Serif',serif;font-size:15px">w</span><span style="display:inline-block;width:8px;text-align:center;font-family:'Liberation Serif',serif;font-size:15px">w</span><span style="display:inline-block;width:8px;text-align:center;font-family:'Liberation Serif',serif;font-size:15px">.</span><span style="display:inline-block;width:8px;text-align:center;font-family:'Liberation Serif',serif;font-size:15px">z</span><span style="display:inline-block;width:8px;text-align:center;font-family:'Liberation Serif',serif;font-size:15px">n</span><span style="display:inline-block;width:8px;text-align:center;font-family:'Liberation Serif',serif;font-size:15px">w</span><span style="display:inline-block;width:8px;text-align:center;font-family:'Liberation Serif',serif;font-size:15px">b</span><span style="display:inline-block;width:8px;text-align:center;font-family:'Liberation Serif',serif;font-size:15px">.</span><span style="display:inline-block;width:8px;text-align:center;font-family:'Liberation Serif',serif;font-size:15px">c</span><span style="display:inline-block;width:8px;text-align:center;font-family:'Liberation Serif',serif;font-size:15px">o</span><span style="display:inline-block;width:8px;text-align:center;font-family:'Liberation Serif',serif;font-size:15px">m</span></div>
<svg class="a" style="left:619px;top:1009px" width="8" height="12" viewBox="0 0 8 12"><path d="M7 1L1.500 6 7 11" fill="none" stroke="#8ab0a5" stroke-width="1.200"/></svg>
<svg class="a" style="left:1195px;top:1009px" width="8" height="12" viewBox="0 0 8 12"><path d="M1 1l5.500 5L1 11" fill="none" stroke="#8ab0a5" stroke-width="1.200"/></svg>
<svg class="a" style="left:1134px;top:987px" width="74" height="19" viewBox="0 0 74 19"><circle cx="7" cy="7.500" r="4.800" fill="#e8f6ff" stroke="#7ab0e0" stroke-width="1.500"/><path d="M10.500 11l5 5" stroke="#c8a850" stroke-width="2.500"/><circle cx="26" cy="6" r="3" fill="#2a6ab0"/><path d="M20 17c0-5 3-7 6-7s6 2 6 7z" fill="#2a6ab0"/><path d="M30 12h5M32.500 9.500v5" stroke="#3a9a3a" stroke-width="2"/><path d="M40 16l2-5 8-8 3 3-8 8z" fill="#f0c040" stroke="#a87a10"/><path d="M40 16l2-5 3 3z" fill="#333"/><path d="M57 5h3l2 8h9l2-6H61" fill="#f8c850" stroke="#d86a10" stroke-width="1.300"/><circle cx="63" cy="16" r="1.500" fill="#c05010"/><circle cx="70" cy="16" r="1.500" fill="#c05010"/><path d="M72 2l-1 5" stroke="#b01010" stroke-width="2"/></svg>
<div class="a" style="left:0px;top:1040px;width:1728px;height:40px;background:#070c15"></div>
<div class="a" style="left:660px;top:1040px;width:131px;height:40px;background:#363b47"></div>
<div class="a" style="left:0px;top:1077px;width:129px;height:3px;background:#82abd8"></div>
<div class="a" style="left:138px;top:1077px;width:123px;height:3px;background:#82abd8"></div>
<div class="a" style="left:270px;top:1077px;width:123px;height:3px;background:#82abd8"></div>
<div class="a" style="left:401px;top:1077px;width:123px;height:3px;background:#82abd8"></div>
<div class="a" style="left:532px;top:1077px;width:123px;height:3px;background:#82abd8"></div>
<div class="a" style="left:660px;top:1077px;width:131px;height:3px;background:#82abd8"></div>
<div class="a" style="left:796px;top:1077px;width:123px;height:3px;background:#82abd8"></div>
<div class="a" style="left:927px;top:1077px;width:123px;height:3px;background:#82abd8"></div>
<div class="a" style="left:1059px;top:1077px;width:123px;height:3px;background:#82abd8"></div>
<div class="a" style="left:1191px;top:1077px;width:122px;height:3px;background:#82abd8"></div>
<svg class="a" style="left:11px;top:1047px" width="24" height="24" viewBox="0 0 24 24"><rect width="24" height="24" rx="5" fill="#fff"/><circle cx="12" cy="9" r="3.300" fill="none" stroke="#3a6ae0" stroke-width="2"/><circle cx="8" cy="14" r="3.300" fill="none" stroke="#3a6ae0" stroke-width="2"/><circle cx="16" cy="14" r="3.300" fill="none" stroke="#3a8af0" stroke-width="2"/><rect x="9" y="21" width="6" height="2" fill="#e84a4a"/></svg>
<div class="t" style="left:39px;top:1051px;font-size:13px;color:#fff;margin-top:1px;font-family:'Liberation Sans','Noto Sans CJK SC',sans-serif;letter-spacing:-1px">欢迎使用百度</div>
<svg class="a" style="left:142px;top:1046px" width="25" height="26" viewBox="0 0 25 26"><rect x="2" y="4" width="8" height="21" fill="#c8d0f0" stroke="#5a60a8"/><rect x="9" y="1" width="7" height="24" fill="#8a90d8" stroke="#3a3f88"/><path d="M16 10l4 -6 3 21h-7z" fill="#4a4fb8"/><path d="M3 8h6M3 12h6M3 16h6M3 20h6M10 6h5M10 10h5M10 14h5M10 18h5" stroke="#fff" stroke-dasharray="1 1"/><rect x="15" y="18" width="9" height="7" fill="#e8e8f8" stroke="#5a60a8"/></svg>
<div class="t" style="left:171px;top:1051px;font-size:13px;color:#fff;margin-top:1px;font-family:'Liberation Sans','Noto Sans CJK SC',sans-serif"><span style="letter-spacing:.150px">sscom</span><span style="letter-spacing:-.300px">32</span></div>
<svg class="a" style="left:277px;top:1049px" width="16" height="21" viewBox="0 0 16 21"><path d="M1 1h9l5 2v17H1z" fill="#f6d574"/><path d="M1 1h3.500v19H1z" fill="#e8bc48"/><path d="M10 1l5 2v17h-5z" fill="#fbe6a0"/><path d="M3 20l2-3 2 3z" fill="#070c15"/></svg>
<div class="t" style="left:302px;top:1051px;font-size:13px;color:#fff;margin-top:1px;font-family:'Liberation Sans','Noto Sans CJK SC',sans-serif"><span style="letter-spacing:-.500px">G</span>:\<span style="letter-spacing:-1.100px">FLASH</span><span style="letter-spacing:-1.700px">_</span><span style="letter-spacing:-.500px">D</span>...</div>
<svg class="a" style="left:409px;top:1049px" width="16" height="21" viewBox="0 0 16 21"><path d="M1 1h9l5 2v17H1z" fill="#f6d574"/><path d="M1 1h3.500v19H1z" fill="#e8bc48"/><path d="M10 1l5 2v17h-5z" fill="#fbe6a0"/><path d="M3 20l2-3 2 3z" fill="#070c15"/></svg>
<div class="t" style="left:434px;top:1051px;font-size:13px;color:#fff;margin-top:1px;font-family:'Liberation Sans','Noto Sans CJK SC',sans-serif"><span style="letter-spacing:-.500px">H</span>:\<span style="letter-spacing:-.300px">8266</span>\<span style="letter-spacing:-1.100px">ESP</span>...</div>
<svg class="a" style="left:540px;top:1049px" width="16" height="21" viewBox="0 0 16 21"><path d="M1 1h9l5 2v17H1z" fill="#f6d574"/><path d="M1 1h3.500v19H1z" fill="#e8bc48"/><path d="M10 1l5 2v17h-5z" fill="#fbe6a0"/><path d="M3 20l2-3 2 3z" fill="#070c15"/></svg>
<div class="t" style="left:565px;top:1051px;font-size:13px;color:#fff;margin-top:1px;font-family:'Liberation Sans','Noto Sans CJK SC',sans-serif;letter-spacing:-.6px"><span style="letter-spacing:-.500px">F</span>:\屏幕录像专...</div>
<svg class="a" style="left:670px;top:1048px" width="23" height="23" viewBox="0 0 23 23"><circle cx="11.500" cy="11.500" r="10.500" fill="#2c2255" stroke="#f7941e" stroke-width="1.300"/><path d="M2 8.500h19M1.500 11.500h20M2 14.500h19" stroke="#fff" stroke-width="1.300"/></svg>
<div class="t" style="left:696px;top:1051px;font-size:13px;color:#fff;margin-top:1px;font-family:'Liberation Sans','Noto Sans CJK SC',sans-serif"><span style="letter-spacing:-.500px">C</span>/<span style="letter-spacing:-.500px">C</span>++ - <span style="letter-spacing:-.300px">16</span> ...</div>
<svg class="a" style="left:801px;top:1049px" width="22" height="20" viewBox="0 0 22 20"><rect x="0.500" y="0.500" width="21" height="19" fill="#f5f5f5" stroke="#8a8a8a"/><rect x="3" y="3" width="10" height="14" fill="#3f8a7a"/><path d="M15 4h4M15 7h4M15 10h2" stroke="#8a8a8a"/></svg>
<div class="t" style="left:828px;top:1051px;font-size:13px;color:#fff;margin-top:1px;font-family:'Liberation Sans','Noto Sans CJK SC',sans-serif"><span style="letter-spacing:-.500px">G</span>:\<span style="letter-spacing:-1.100px">FLASH</span><span style="letter-spacing:-1.700px">_</span><span style="letter-spacing:-.500px">D</span>...</div>
<svg class="a" style="left:931px;top:1047px" width="25" height="25" viewBox="0 0 25 25"><g transform="translate(12.500 12.500)"><g fill="#2f9ae8"><rect x="-2.500" y="-12" width="5" height="24" rx="1"/><rect x="-2.500" y="-12" width="5" height="24" rx="1" transform="rotate(45)"/><rect x="-2.500" y="-12" width="5" height="24" rx="1" transform="rotate(90)"/><rect x="-2.500" y="-12" width="5" height="24" rx="1" transform="rotate(135)"/><circle r="9"/></g><circle r="4" fill="#0c0f18"/></g></svg>
<div class="t" style="left:960px;top:1051px;font-size:13px;color:#fff;margin-top:1px;font-family:'Liberation Sans','Noto Sans CJK SC',sans-serif"><span style="letter-spacing:-1.100px">ESP</span><span style="letter-spacing:-.300px">8266</span> <span style="letter-spacing:-1.100px">DO</span>...</div>
<svg class="a" style="left:1063px;top:1047px" width="24" height="25" viewBox="0 0 24 25"><path d="M5 1h12l6 6v17H5z" fill="#fff" stroke="#c8c8c8"/><path d="M17 1v6h6" fill="#e0e0e0"/><rect x="0" y="2" width="15" height="8" rx="1" fill="#d8232a"/><text x="7.500" y="8.500" font-size="6.500" font-family="Liberation Sans,sans-serif" font-weight="bold" fill="#fff" text-anchor="middle">PDF</text><path d="M9 21c3-5 5-9 4-9s0 6 6 7c-4 0-8 1-10 2z" fill="none" stroke="#d8232a" stroke-width="1.200"/></svg>
<div class="t" style="left:1092px;top:1051px;font-size:13px;color:#fff;margin-top:1px;font-family:'Liberation Sans','Noto Sans CJK SC',sans-serif"><span style="letter-spacing:-1.100px">ESP</span><span style="letter-spacing:-.300px">8266</span>开发...</div>
<svg class="a" style="left:1196px;top:1049px" width="24" height="21" viewBox="0 0 24 21"><path d="M0 3h6l2-3h8l2 3h6v18H0z" fill="#fff"/><circle cx="12" cy="12" r="6" fill="#0c0f18"/><circle cx="12" cy="12" r="3.500" fill="#fff"/><circle cx="12" cy="12" r="3.500" fill="#0c0f18" transform="translate(1.500 -1.500)"/></svg>
<div class="t" style="left:1224px;top:1051px;font-size:13px;color:#fff;margin-top:1px;font-family:'Liberation Sans','Noto Sans CJK SC',sans-serif">相机</div>
<svg class="a" style="left:1336px;top:1044px" width="392" height="32" viewBox="0 0 392 32"><g fill="none" stroke="#fff" stroke-width="1.400"><circle cx="10" cy="16" r="2.600"/><path d="M5.500 24c0-3.500 2-5 4.500-5s3.500 1 4.500 2.500"/><circle cx="17" cy="10" r="2.800"/><path d="M13 15c2-2 7-2.500 8 3.500"/></g><path d="M42 10h9v11h-9zM51 13l6-3v11l-6-3z" fill="#8a8f98"/><path d="M44 12h5M44 15h5M44 18h5" stroke="#c8c8c8"/><path d="M68 21a4 4 0 0 1 1-8 6 6 0 0 1 11 0 4 4 0 0 1 1 8z" fill="#7a7f88"/><path d="M97 6c-2 2-5 2-7 2v8c0 4 3 7 7 9 4-2 7-5 7-9V8c-2 0-5 0-7-2z" fill="#fff"/><path d="M97 6v19M90 14h14" stroke="#0c0f18" stroke-width="1.500"/><path d="M103 17l5 9h-10z" fill="#f8c030"/><rect x="114" y="5" width="17" height="21" rx="3" fill="#fff"/><path d="M118 19a3 3 0 0 1 .5-6 4.500 4.500 0 0 1 8.500 0 3 3 0 0 1 .5 6z" fill="none" stroke="#5a8ad0" stroke-width="1.500"/><rect x="139" y="10" width="7" height="7" fill="#fff"/><rect x="143" y="14" width="8" height="8" fill="#d8d8d8" stroke="#0c0f18"/><rect x="162" y="6" width="17" height="18" rx="3" fill="#fff"/><circle cx="170.500" cy="12" r="2.500" fill="none" stroke="#3a6ae0" stroke-width="1.600"/><circle cx="167.500" cy="16.500" r="2.500" fill="none" stroke="#3a6ae0" stroke-width="1.600"/><circle cx="173.500" cy="16.500" r="2.500" fill="none" stroke="#3a6ae0" stroke-width="1.600"/><ellipse cx="192" cy="13" rx="6.500" ry="5.500" fill="#4ab848"/><ellipse cx="198" cy="18" rx="5.500" ry="4.500" fill="#e8e8e8"/><circle cx="218" cy="16" r="8" fill="#2f9ae8"/><ellipse cx="218" cy="17" rx="5" ry="4" fill="#d8f0ff"/><path d="M216 15v3M220 15v3" stroke="#1a4a8a"/><circle cx="242" cy="16" r="8" fill="#f0a060"/><rect x="238" y="12" width="8" height="8" rx="1" fill="#f8e0c8"/><circle cx="266" cy="16" r="8" fill="#c8d820"/><circle cx="266" cy="16" r="6.500" fill="#e8f040"/><path d="M266 11v10M261 16h10" stroke="#1a6a1a" stroke-width="2.500"/><ellipse cx="289" cy="15" rx="7" ry="4" fill="none" stroke="#c8c8c8" stroke-width="1.300" transform="rotate(45 289 15)"/><path d="M289 16l-6 10h10z" fill="#8a8a8a"/><circle cx="284" cy="24" r="2" fill="#c8c8c8"/><rect x="309.500" y="11.500" width="8" height="14" rx="1" fill="none" stroke="#fff" stroke-width="1.300"/><rect x="311" y="6" width="5" height="5" fill="none" stroke="#fff" stroke-width="1.200"/><path d="M316 23l2 2 4-6" fill="none" stroke="#c8c8c8" stroke-width="1.200"/><rect x="333.500" y="9.500" width="13" height="10" fill="none" stroke="#fff" stroke-width="1.400"/><path d="M340 20v4M335 24.500h10" stroke="#fff" stroke-width="1.400"/><rect x="329.500" y="7.500" width="5" height="5" fill="#0c0f18" stroke="#fff" stroke-width="1.200"/><path d="M354 13h3l4-4v14l-4-4h-3z" fill="none" stroke="#fff" stroke-width="1.300"/><path d="M364 12c1.500 2 1.500 6 0 8M367 10c2.500 3 2.500 9 0 12M370 8c3.500 4 3.500 12 0 16" fill="none" stroke="#fff" stroke-width="1.200"/></svg>
<div class="t" style="left:1716px;top:1051px;font-size:15px;color:#fff;line-height:20px;height:20px;top:1049px">简</div>
</body></html>
